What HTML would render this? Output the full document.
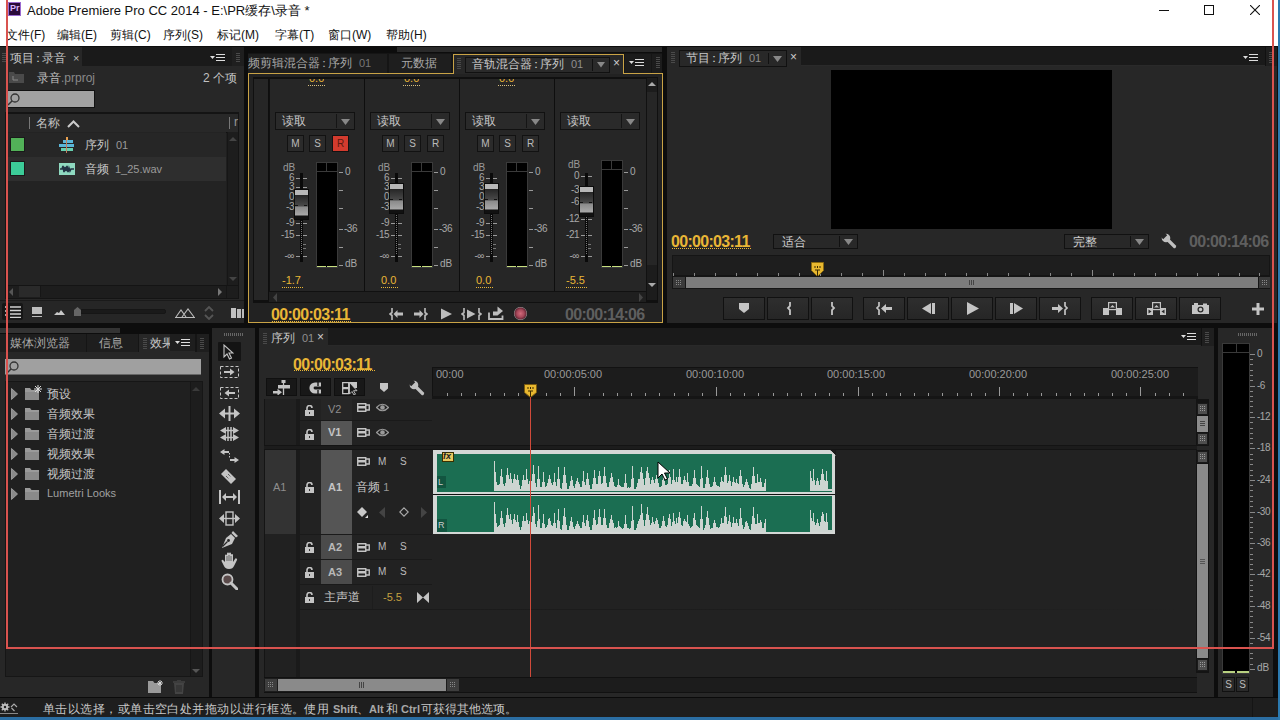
<!DOCTYPE html>
<html><head><meta charset="utf-8">
<style>
*{margin:0;padding:0;box-sizing:border-box}
html,body{width:1280px;height:720px;overflow:hidden;background:#0d0d0d;font-family:"Liberation Sans",sans-serif;color:#b8b8b8}
.a{position:absolute}
.t{position:absolute;white-space:nowrap;line-height:1}
#title{left:0;top:0;width:1280px;height:46px;background:#fff}
.pn{position:absolute;background:#272727}
.tb{position:absolute;background:#1a1a1a}
.yel{color:#e9b636}
.btn{position:absolute;background:#262626;border:1px solid #111;border-radius:1px}
.grip{position:absolute;width:5px;background:repeating-linear-gradient(#4a4a4a 0 1px,transparent 1px 2px)}
.griph{position:absolute;height:3px;background:repeating-linear-gradient(90deg,#666 0 1px,transparent 1px 2px)}
</style></head><body>
<!-- title + menu -->
<div id="title" class="a"></div>
<div class="a" style="left:8px;top:2px;width:13px;height:14px;background:#2a0a3a;border:1px solid #9a6ad0"></div>
<div class="t" style="left:10px;top:4px;font-size:9px;color:#d8b4fe;font-weight:bold">Pr</div>
<div class="t" style="left:27px;top:4px;font-size:13px;color:#111">Adobe Premiere Pro CC 2014 - E:\PR缓存\录音 *</div>
<div class="t" style="left:6px;top:29px;font-size:12px;color:#111">文件(F)</div>
<div class="t" style="left:57px;top:29px;font-size:12px;color:#111">编辑(E)</div>
<div class="t" style="left:110px;top:29px;font-size:12px;color:#111">剪辑(C)</div>
<div class="t" style="left:163px;top:29px;font-size:12px;color:#111">序列(S)</div>
<div class="t" style="left:217px;top:29px;font-size:12px;color:#111">标记(M)</div>
<div class="t" style="left:275px;top:29px;font-size:12px;color:#111">字幕(T)</div>
<div class="t" style="left:328px;top:29px;font-size:12px;color:#111">窗口(W)</div>
<div class="t" style="left:386px;top:29px;font-size:12px;color:#111">帮助(H)</div>
<div class="a" style="left:1159px;top:10px;width:10px;height:1px;background:#111"></div>
<div class="a" style="left:1204px;top:5px;width:10px;height:10px;border:1px solid #111"></div>
<svg class="a" style="left:1250px;top:5px" width="10" height="10"><path d="M0 0L10 10M10 0L0 10" stroke="#111" stroke-width="1.1"/></svg>


<!-- Project panel -->
<div class="pn" style="left:0;top:47px;width:244px;height:276px"></div>
<div class="tb" style="left:82px;top:47px;width:150px;height:19px"></div>
<div class="tb" style="left:232px;top:47px;width:12px;height:19px;background:#1f1f1f"></div>
<div class="grip" style="left:2px;top:53px;height:10px;width:4px"></div>
<div class="t" style="left:10px;top:52px;font-size:12px;color:#c4c4c4">项目<span style="margin:0 -2px">：</span>录音</div>
<div class="t" style="left:73px;top:53px;font-size:11px;color:#bbb">×</div>
<svg class="a" style="left:210px;top:53px" width="16" height="10"><path d="M0 3h5L2.5 6z" fill="#ddd"/><path d="M6 1.5h9M6 4.5h9M6 7.5h9" stroke="#ddd" stroke-width="1.2"/></svg>
<div class="grip" style="left:236px;top:53px;height:10px;width:4px"></div>
<svg class="a" style="left:9px;top:71px" width="15" height="12"><path d="M0 1h5l1 2h9v9H0z" fill="#4a4a4a"/><path d="M4 5v4h5" stroke="#888" fill="none"/></svg>
<div class="t" style="left:37px;top:72px;font-size:12px;color:#c0c0c0">录音<span style="color:#8a8a8a">.prproj</span></div>
<div class="t" style="left:203px;top:72px;font-size:12px;color:#c0c0c0">2 个项</div>
<div class="a" style="left:6px;top:90px;width:89px;height:18px;background:#a2a2a2;border:1px solid #121212"></div>
<svg class="a" style="left:7px;top:92px" width="14" height="14"><circle cx="8" cy="6" r="4" stroke="#333" stroke-width="1.3" fill="none"/><path d="M5 9L1 13" stroke="#333" stroke-width="1.5"/></svg>
<div class="a" style="left:5px;top:112px;width:234px;height:187px;background:#1f1f1f;border:1px solid #141414"></div>
<div class="a" style="left:6px;top:113px;width:232px;height:20px;background:#282828;border-top:1px solid #141414;border-bottom:1px solid #111"></div>
<div class="a" style="left:29px;top:117px;width:1px;height:12px;background:#777"></div>
<div class="t" style="left:36px;top:117px;font-size:12px;color:#c4c4c4">名称</div>
<svg class="a" style="left:67px;top:120px" width="13" height="8"><path d="M1 7L6.5 1.5 12 7" stroke="#ccc" stroke-width="2" fill="none"/></svg>
<div class="a" style="left:229px;top:117px;width:1px;height:12px;background:#777"></div>
<div class="t" style="left:234px;top:116px;font-size:12px;color:#999">r</div>
<div class="a" style="left:6px;top:132px;width:220px;height:153px;background:#232323"></div>
<div class="a" style="left:6px;top:133px;width:220px;height:24px;background:#262626"></div>
<div class="a" style="left:6px;top:157px;width:220px;height:24px;background:#2e2e2e"></div>
<div class="a" style="left:10px;top:137px;width:15px;height:15px;background:#52b158;border:1px solid #1a1a1a"></div>
<div class="a" style="left:10px;top:161px;width:15px;height:15px;background:#3ccc98;border:1px solid #1a1a1a"></div>
<svg class="a" style="left:59px;top:137px" width="16" height="17"><rect x="7" y="0" width="2" height="3" fill="#e8a050"/><rect x="4" y="3" width="10" height="3" fill="#5ab6d8"/><rect x="0" y="7" width="15" height="3" fill="#5ab6d8"/><rect x="2" y="11" width="12" height="3" fill="#66d0b0"/><rect x="7" y="3" width="1" height="13" fill="#c08060"/></svg>
<svg class="a" style="left:59px;top:163px" width="16" height="12"><rect width="16" height="12" fill="#8fd9c0"/><path d="M1 6h2l1-3 1 6 1-5 1 4 1-5 1 6 1-4 1 3 1-2h3" stroke="#234" stroke-width="1.6" fill="none"/></svg>
<div class="t" style="left:85px;top:139px;font-size:12px;color:#c8c8c8">序列<span style="color:#9a9a9a;margin-left:7px;font-size:11px">01</span></div>
<div class="t" style="left:85px;top:163px;font-size:12px;color:#c8c8c8">音频<span style="color:#9a9a9a;margin-left:6px;font-size:11px">1_25.wav</span></div>
<div class="a" style="left:227px;top:132px;width:11px;height:153px;background:#1d1d1d;border-left:1px solid #161616"></div>
<svg class="a" style="left:228px;top:136px" width="10" height="6"><path d="M1 5L5 1 9 5z" fill="#444"/></svg>
<svg class="a" style="left:228px;top:276px" width="10" height="6"><path d="M1 1L5 5 9 1z" fill="#444"/></svg>
<div class="a" style="left:6px;top:285px;width:232px;height:13px;background:#1d1d1d;border-top:1px solid #141414"></div>
<svg class="a" style="left:8px;top:287px" width="6" height="10"><path d="M5 1L1 5 5 9z" fill="#555"/></svg>
<div class="a" style="left:19px;top:286px;width:22px;height:11px;background:#2a2a2a;border-right:1px solid #161616"></div>
<svg class="a" style="left:217px;top:287px" width="6" height="10"><path d="M1 1L5 5 1 9z" fill="#777"/></svg>
<div class="a" style="left:226px;top:286px;width:1px;height:12px;background:#161616"></div>
<!-- bottom toolbar -->
<div class="a" style="left:0;top:300px;width:244px;height:23px;background:#262626;border-top:1px solid #1a1a1a"></div>
<div class="a" style="left:2px;top:303px;width:21px;height:17px;background:#161616;border-radius:2px"></div>
<svg class="a" style="left:4px;top:306px" width="18" height="12"><path d="M1 1h2M1 5h2M1 9h2M6 1h11M6 4.5h11M6 8h11M6 11.5h11" stroke="#d0d0d0" stroke-width="1.3"/></svg>
<div class="a" style="left:32px;top:307px;width:10px;height:7px;background:#bdbdbd"></div>
<div class="a" style="left:32px;top:316px;width:10px;height:1px;background:#bdbdbd"></div>
<svg class="a" style="left:54px;top:310px" width="11" height="5"><path d="M0 5L3 2 5 3 7 0 11 5z" fill="#c8c8c8"/></svg>
<div class="a" style="left:80px;top:309px;width:86px;height:5px;background:#1a1a1a;border-radius:2px;border:1px solid #161616"></div>
<svg class="a" style="left:74px;top:307px" width="7" height="9"><path d="M0 3L3.5 0 7 3v6H0z" fill="#666"/></svg>
<svg class="a" style="left:175px;top:308px" width="20" height="10"><path d="M1 9L6 2 11 9M7 9L13 1 19 9" stroke="#bbb" stroke-width="1.1" fill="none"/><path d="M0 9.5h20" stroke="#bbb"/></svg>
<svg class="a" style="left:204px;top:306px" width="10" height="14"><path d="M1 5L5 1 9 5M1 9L5 13 9 9" stroke="#555" stroke-width="1.8" fill="none"/></svg>
<div class="a" style="left:231px;top:308px;width:5px;height:10px;background:#c0c0c0"></div>
<div class="a" style="left:237px;top:309px;width:4px;height:9px;background:#bbb"></div>
<div class="a" style="left:242px;top:309px;width:2px;height:9px;background:#bbb"></div>

<!-- Audio mixer group -->
<div class="a" style="left:397px;top:47px;width:265px;height:5px;background:#2a2a2a"></div>
<div class="tb" style="left:248px;top:53px;width:414px;height:20px;background:#151515"></div>
<div class="a" style="left:625px;top:54px;width:26px;height:19px;background:#1c1c1c"></div>
<div class="a" style="left:652px;top:54px;width:10px;height:19px;background:#1c1c1c"></div>
<div class="a" style="left:248px;top:54px;width:139px;height:19px;background:#1e1e1e;overflow:hidden"><div class="t" style="left:-12px;top:3px;font-size:12px;color:#a8a8a8">音频剪辑混合器<span style="margin:0 -2px">：</span>序列<span style="color:#777;margin-left:7px;font-size:11px">01</span></div></div>
<div class="a" style="left:389px;top:54px;width:62px;height:19px;background:#1e1e1e"></div>
<div class="t" style="left:401px;top:57px;font-size:12px;color:#a8a8a8">元数据</div>
<div class="a" style="left:453px;top:54px;width:171px;height:20px;border:1px solid #c9a346;border-bottom:none;background:#272727"></div>
<div class="grip" style="left:457px;top:58px;height:11px;width:4px"></div>
<div class="a" style="left:465px;top:57px;width:145px;height:16px;background:#2a2a2a;border:1px solid #111"></div>
<div class="t" style="left:472px;top:58px;font-size:12px;color:#c8c8c8">音轨混合器<span style="margin:0 -2px">：</span>序列<span style="color:#909090;margin-left:7px;font-size:11px">01</span></div>
<div class="a" style="left:592px;top:59px;width:1px;height:12px;background:#111"></div>
<svg class="a" style="left:597px;top:62px" width="8" height="6"><path d="M0 0h8L4 5.5z" fill="#888"/></svg>
<div class="t" style="left:613px;top:57px;font-size:12px;color:#ccc">×</div>
<svg class="a" style="left:629px;top:58px" width="16" height="10"><path d="M0 3h5L2.5 6z" fill="#ddd"/><path d="M6 1.5h9M6 4.5h9M6 7.5h9" stroke="#ddd" stroke-width="1.2"/></svg>
<div class="grip" style="left:656px;top:57px;height:11px;width:4px"></div>
<div class="a" style="left:248px;top:73px;width:415px;height:250px;border:1px solid #c9a346;border-top:none"></div>
<div class="a" style="left:248px;top:73px;width:206px;height:1px;background:#c9a346"></div>
<div class="a" style="left:624px;top:73px;width:39px;height:1px;background:#c9a346"></div>
<div class="a" style="left:249px;top:74px;width:413px;height:248px;background:#222"></div>
<div class="a" style="left:253px;top:77px;width:405px;height:226px;background:#101010"></div>
<div class="a" style="left:254px;top:79px;width:15px;height:221px;background:#262626;border-right:1px solid #0e0e0e"></div>
<div class="a" style="left:270px;top:79px;width:95px;height:212px;background:#262626"></div>
<div class="t yel" style="left:309px;top:73px;font-size:11px;clip-path:inset(6px 0 0 0)">0.0</div>
<div class="a" style="left:308px;top:85px;width:17px;height:1px;background:repeating-linear-gradient(90deg,#d8c080 0 1px,transparent 1px 2px)"></div>
<div class="a" style="left:275px;top:112px;width:80px;height:18px;background:#2a2a2a;border:1px solid #111"></div>
<div class="t" style="left:282px;top:115px;font-size:12px;color:#c8c8c8">读取</div>
<div class="a" style="left:336px;top:114px;width:1px;height:14px;background:#151515"></div>
<svg class="a" style="left:341px;top:119px" width="9" height="6"><path d="M0 0h9L4.5 6z" fill="#888"/></svg>
<div class="a" style="left:287px;top:135px;width:17px;height:17px;background:#2b2b2b;border:1px solid #121212"></div>
<div class="t" style="left:287px;top:139px;width:17px;text-align:center;font-size:10px;color:#bbb">M</div>
<div class="a" style="left:309px;top:135px;width:17px;height:17px;background:#2b2b2b;border:1px solid #121212"></div>
<div class="t" style="left:309px;top:139px;width:17px;text-align:center;font-size:10px;color:#bbb">S</div>
<div class="a" style="left:332px;top:135px;width:17px;height:17px;background:#d23b2e;border:1px solid #121212"></div>
<div class="t" style="left:332px;top:139px;width:17px;text-align:center;font-size:10px;color:#5a1a10">R</div>
<div class="t" style="left:283px;top:163px;font-size:10px;color:#999">dB</div>
<div class="a" style="left:300px;top:173px;width:3px;height:89px;background:#0a0a0a"></div>
<div class="a" style="left:301px;top:215px;width:1px;height:40px;background:repeating-linear-gradient(#777 0 1px,transparent 1px 2px)"></div>
<div class="t" style="left:268px;top:173px;width:26px;text-align:right;font-size:10px;color:#a8a8a8;letter-spacing:-0.5px">6</div>
<div class="a" style="left:296px;top:178px;width:4px;height:1px;background:#999"></div>
<div class="a" style="left:303px;top:178px;width:4px;height:1px;background:#999"></div>
<div class="t" style="left:268px;top:182px;width:26px;text-align:right;font-size:10px;color:#a8a8a8;letter-spacing:-0.5px">3</div>
<div class="a" style="left:296px;top:187px;width:4px;height:1px;background:#999"></div>
<div class="a" style="left:303px;top:187px;width:4px;height:1px;background:#999"></div>
<div class="t" style="left:268px;top:192px;width:26px;text-align:right;font-size:10px;color:#a8a8a8;letter-spacing:-0.5px">0</div>
<div class="a" style="left:296px;top:197px;width:4px;height:1px;background:#999"></div>
<div class="a" style="left:303px;top:197px;width:4px;height:1px;background:#999"></div>
<div class="t" style="left:268px;top:202px;width:26px;text-align:right;font-size:10px;color:#a8a8a8;letter-spacing:-0.5px">-3</div>
<div class="a" style="left:296px;top:207px;width:4px;height:1px;background:#999"></div>
<div class="a" style="left:303px;top:207px;width:4px;height:1px;background:#999"></div>
<div class="t" style="left:268px;top:218px;width:26px;text-align:right;font-size:10px;color:#a8a8a8;letter-spacing:-0.5px">-9</div>
<div class="a" style="left:296px;top:223px;width:4px;height:1px;background:#999"></div>
<div class="a" style="left:303px;top:223px;width:4px;height:1px;background:#999"></div>
<div class="t" style="left:268px;top:230px;width:26px;text-align:right;font-size:10px;color:#a8a8a8;letter-spacing:-0.5px">-15</div>
<div class="a" style="left:296px;top:235px;width:4px;height:1px;background:#999"></div>
<div class="a" style="left:303px;top:235px;width:4px;height:1px;background:#999"></div>
<div class="t" style="left:268px;top:251px;width:26px;text-align:right;font-size:10px;color:#a8a8a8;letter-spacing:-0.5px">-∞</div>
<div class="a" style="left:296px;top:256px;width:4px;height:1px;background:#999"></div>
<div class="a" style="left:303px;top:256px;width:4px;height:1px;background:#999"></div>
<div class="a" style="left:303px;top:244px;width:3px;height:1px;background:#777"></div>
<div class="a" style="left:303px;top:248px;width:3px;height:1px;background:#777"></div>
<div class="a" style="left:294px;top:189px;width:15px;height:31px;background:linear-gradient(#b8b8b8 0 5px,#262626 5px,#4a4a4a 16px,#8a8a8a 17px,#a8a8a8 25px,#111 26px);border:1px solid #0c0c0c"></div>
<div class="a" style="left:295px;top:205px;width:3px;height:1px;background:#111"></div>
<div class="a" style="left:304px;top:205px;width:3px;height:1px;background:#111"></div>
<div class="a" style="left:316px;top:162px;width:22px;height:106px;background:#000;border:1px solid #3a3a3a"></div>
<div class="a" style="left:326px;top:163px;width:1px;height:9px;background:#3a3a3a"></div>
<div class="a" style="left:316px;top:171px;width:22px;height:1px;background:#3a3a3a"></div>
<div class="a" style="left:317px;top:266px;width:9px;height:1px;background:#c8e080"></div>
<div class="a" style="left:327px;top:266px;width:10px;height:1px;background:#c8e080"></div>
<div class="a" style="left:339px;top:172px;width:4px;height:1px;background:#999"></div>
<div class="a" style="left:339px;top:190px;width:4px;height:1px;background:#999"></div>
<div class="a" style="left:339px;top:208px;width:4px;height:1px;background:#999"></div>
<div class="a" style="left:339px;top:229px;width:4px;height:1px;background:#999"></div>
<div class="a" style="left:339px;top:247px;width:4px;height:1px;background:#999"></div>
<div class="a" style="left:339px;top:265px;width:4px;height:1px;background:#999"></div>
<div class="t" style="left:345px;top:167px;font-size:10px;color:#a8a8a8">0</div>
<div class="t" style="left:344px;top:224px;font-size:10px;color:#a8a8a8;letter-spacing:-0.5px">-36</div>
<div class="t" style="left:345px;top:259px;font-size:10px;color:#a8a8a8">dB</div>
<div class="t yel" style="left:282px;top:275px;font-size:11px">-1.7</div>
<div class="a" style="left:282px;top:287px;width:22px;height:1px;background:repeating-linear-gradient(90deg,#e9b636 0 1px,transparent 1px 2px)"></div>
<div class="a" style="left:365px;top:79px;width:95px;height:212px;background:#262626"></div>
<div class="t yel" style="left:404px;top:73px;font-size:11px;clip-path:inset(6px 0 0 0)">0.0</div>
<div class="a" style="left:403px;top:85px;width:17px;height:1px;background:repeating-linear-gradient(90deg,#d8c080 0 1px,transparent 1px 2px)"></div>
<div class="a" style="left:370px;top:112px;width:80px;height:18px;background:#2a2a2a;border:1px solid #111"></div>
<div class="t" style="left:377px;top:115px;font-size:12px;color:#c8c8c8">读取</div>
<div class="a" style="left:431px;top:114px;width:1px;height:14px;background:#151515"></div>
<svg class="a" style="left:436px;top:119px" width="9" height="6"><path d="M0 0h9L4.5 6z" fill="#888"/></svg>
<div class="a" style="left:382px;top:135px;width:17px;height:17px;background:#2b2b2b;border:1px solid #121212"></div>
<div class="t" style="left:382px;top:139px;width:17px;text-align:center;font-size:10px;color:#bbb">M</div>
<div class="a" style="left:404px;top:135px;width:17px;height:17px;background:#2b2b2b;border:1px solid #121212"></div>
<div class="t" style="left:404px;top:139px;width:17px;text-align:center;font-size:10px;color:#bbb">S</div>
<div class="a" style="left:427px;top:135px;width:17px;height:17px;background:#2b2b2b;border:1px solid #121212"></div>
<div class="t" style="left:427px;top:139px;width:17px;text-align:center;font-size:10px;color:#bbb">R</div>
<div class="t" style="left:378px;top:163px;font-size:10px;color:#999">dB</div>
<div class="a" style="left:395px;top:173px;width:3px;height:89px;background:#0a0a0a"></div>
<div class="a" style="left:396px;top:215px;width:1px;height:40px;background:repeating-linear-gradient(#777 0 1px,transparent 1px 2px)"></div>
<div class="t" style="left:363px;top:173px;width:26px;text-align:right;font-size:10px;color:#a8a8a8;letter-spacing:-0.5px">6</div>
<div class="a" style="left:391px;top:178px;width:4px;height:1px;background:#999"></div>
<div class="a" style="left:398px;top:178px;width:4px;height:1px;background:#999"></div>
<div class="t" style="left:363px;top:182px;width:26px;text-align:right;font-size:10px;color:#a8a8a8;letter-spacing:-0.5px">3</div>
<div class="a" style="left:391px;top:187px;width:4px;height:1px;background:#999"></div>
<div class="a" style="left:398px;top:187px;width:4px;height:1px;background:#999"></div>
<div class="t" style="left:363px;top:192px;width:26px;text-align:right;font-size:10px;color:#a8a8a8;letter-spacing:-0.5px">0</div>
<div class="a" style="left:391px;top:197px;width:4px;height:1px;background:#999"></div>
<div class="a" style="left:398px;top:197px;width:4px;height:1px;background:#999"></div>
<div class="t" style="left:363px;top:202px;width:26px;text-align:right;font-size:10px;color:#a8a8a8;letter-spacing:-0.5px">-3</div>
<div class="a" style="left:391px;top:207px;width:4px;height:1px;background:#999"></div>
<div class="a" style="left:398px;top:207px;width:4px;height:1px;background:#999"></div>
<div class="t" style="left:363px;top:218px;width:26px;text-align:right;font-size:10px;color:#a8a8a8;letter-spacing:-0.5px">-9</div>
<div class="a" style="left:391px;top:223px;width:4px;height:1px;background:#999"></div>
<div class="a" style="left:398px;top:223px;width:4px;height:1px;background:#999"></div>
<div class="t" style="left:363px;top:230px;width:26px;text-align:right;font-size:10px;color:#a8a8a8;letter-spacing:-0.5px">-15</div>
<div class="a" style="left:391px;top:235px;width:4px;height:1px;background:#999"></div>
<div class="a" style="left:398px;top:235px;width:4px;height:1px;background:#999"></div>
<div class="t" style="left:363px;top:251px;width:26px;text-align:right;font-size:10px;color:#a8a8a8;letter-spacing:-0.5px">-∞</div>
<div class="a" style="left:391px;top:256px;width:4px;height:1px;background:#999"></div>
<div class="a" style="left:398px;top:256px;width:4px;height:1px;background:#999"></div>
<div class="a" style="left:398px;top:244px;width:3px;height:1px;background:#777"></div>
<div class="a" style="left:398px;top:248px;width:3px;height:1px;background:#777"></div>
<div class="a" style="left:389px;top:183px;width:15px;height:31px;background:linear-gradient(#b8b8b8 0 5px,#262626 5px,#4a4a4a 16px,#8a8a8a 17px,#a8a8a8 25px,#111 26px);border:1px solid #0c0c0c"></div>
<div class="a" style="left:390px;top:199px;width:3px;height:1px;background:#111"></div>
<div class="a" style="left:399px;top:199px;width:3px;height:1px;background:#111"></div>
<div class="a" style="left:411px;top:162px;width:22px;height:106px;background:#000;border:1px solid #3a3a3a"></div>
<div class="a" style="left:421px;top:163px;width:1px;height:9px;background:#3a3a3a"></div>
<div class="a" style="left:411px;top:171px;width:22px;height:1px;background:#3a3a3a"></div>
<div class="a" style="left:412px;top:266px;width:9px;height:1px;background:#c8e080"></div>
<div class="a" style="left:422px;top:266px;width:10px;height:1px;background:#c8e080"></div>
<div class="a" style="left:434px;top:172px;width:4px;height:1px;background:#999"></div>
<div class="a" style="left:434px;top:190px;width:4px;height:1px;background:#999"></div>
<div class="a" style="left:434px;top:208px;width:4px;height:1px;background:#999"></div>
<div class="a" style="left:434px;top:229px;width:4px;height:1px;background:#999"></div>
<div class="a" style="left:434px;top:247px;width:4px;height:1px;background:#999"></div>
<div class="a" style="left:434px;top:265px;width:4px;height:1px;background:#999"></div>
<div class="t" style="left:440px;top:167px;font-size:10px;color:#a8a8a8">0</div>
<div class="t" style="left:439px;top:224px;font-size:10px;color:#a8a8a8;letter-spacing:-0.5px">-36</div>
<div class="t" style="left:440px;top:259px;font-size:10px;color:#a8a8a8">dB</div>
<div class="t yel" style="left:381px;top:275px;font-size:11px">0.0</div>
<div class="a" style="left:381px;top:287px;width:17px;height:1px;background:repeating-linear-gradient(90deg,#e9b636 0 1px,transparent 1px 2px)"></div>
<div class="a" style="left:460px;top:79px;width:95px;height:212px;background:#262626"></div>
<div class="t yel" style="left:499px;top:73px;font-size:11px;clip-path:inset(6px 0 0 0)">0.0</div>
<div class="a" style="left:498px;top:85px;width:17px;height:1px;background:repeating-linear-gradient(90deg,#d8c080 0 1px,transparent 1px 2px)"></div>
<div class="a" style="left:465px;top:112px;width:80px;height:18px;background:#2a2a2a;border:1px solid #111"></div>
<div class="t" style="left:472px;top:115px;font-size:12px;color:#c8c8c8">读取</div>
<div class="a" style="left:526px;top:114px;width:1px;height:14px;background:#151515"></div>
<svg class="a" style="left:531px;top:119px" width="9" height="6"><path d="M0 0h9L4.5 6z" fill="#888"/></svg>
<div class="a" style="left:477px;top:135px;width:17px;height:17px;background:#2b2b2b;border:1px solid #121212"></div>
<div class="t" style="left:477px;top:139px;width:17px;text-align:center;font-size:10px;color:#bbb">M</div>
<div class="a" style="left:499px;top:135px;width:17px;height:17px;background:#2b2b2b;border:1px solid #121212"></div>
<div class="t" style="left:499px;top:139px;width:17px;text-align:center;font-size:10px;color:#bbb">S</div>
<div class="a" style="left:522px;top:135px;width:17px;height:17px;background:#2b2b2b;border:1px solid #121212"></div>
<div class="t" style="left:522px;top:139px;width:17px;text-align:center;font-size:10px;color:#bbb">R</div>
<div class="t" style="left:473px;top:163px;font-size:10px;color:#999">dB</div>
<div class="a" style="left:490px;top:173px;width:3px;height:89px;background:#0a0a0a"></div>
<div class="a" style="left:491px;top:215px;width:1px;height:40px;background:repeating-linear-gradient(#777 0 1px,transparent 1px 2px)"></div>
<div class="t" style="left:458px;top:173px;width:26px;text-align:right;font-size:10px;color:#a8a8a8;letter-spacing:-0.5px">6</div>
<div class="a" style="left:486px;top:178px;width:4px;height:1px;background:#999"></div>
<div class="a" style="left:493px;top:178px;width:4px;height:1px;background:#999"></div>
<div class="t" style="left:458px;top:182px;width:26px;text-align:right;font-size:10px;color:#a8a8a8;letter-spacing:-0.5px">3</div>
<div class="a" style="left:486px;top:187px;width:4px;height:1px;background:#999"></div>
<div class="a" style="left:493px;top:187px;width:4px;height:1px;background:#999"></div>
<div class="t" style="left:458px;top:192px;width:26px;text-align:right;font-size:10px;color:#a8a8a8;letter-spacing:-0.5px">0</div>
<div class="a" style="left:486px;top:197px;width:4px;height:1px;background:#999"></div>
<div class="a" style="left:493px;top:197px;width:4px;height:1px;background:#999"></div>
<div class="t" style="left:458px;top:202px;width:26px;text-align:right;font-size:10px;color:#a8a8a8;letter-spacing:-0.5px">-3</div>
<div class="a" style="left:486px;top:207px;width:4px;height:1px;background:#999"></div>
<div class="a" style="left:493px;top:207px;width:4px;height:1px;background:#999"></div>
<div class="t" style="left:458px;top:218px;width:26px;text-align:right;font-size:10px;color:#a8a8a8;letter-spacing:-0.5px">-9</div>
<div class="a" style="left:486px;top:223px;width:4px;height:1px;background:#999"></div>
<div class="a" style="left:493px;top:223px;width:4px;height:1px;background:#999"></div>
<div class="t" style="left:458px;top:230px;width:26px;text-align:right;font-size:10px;color:#a8a8a8;letter-spacing:-0.5px">-15</div>
<div class="a" style="left:486px;top:235px;width:4px;height:1px;background:#999"></div>
<div class="a" style="left:493px;top:235px;width:4px;height:1px;background:#999"></div>
<div class="t" style="left:458px;top:251px;width:26px;text-align:right;font-size:10px;color:#a8a8a8;letter-spacing:-0.5px">-∞</div>
<div class="a" style="left:486px;top:256px;width:4px;height:1px;background:#999"></div>
<div class="a" style="left:493px;top:256px;width:4px;height:1px;background:#999"></div>
<div class="a" style="left:493px;top:244px;width:3px;height:1px;background:#777"></div>
<div class="a" style="left:493px;top:248px;width:3px;height:1px;background:#777"></div>
<div class="a" style="left:484px;top:183px;width:15px;height:31px;background:linear-gradient(#b8b8b8 0 5px,#262626 5px,#4a4a4a 16px,#8a8a8a 17px,#a8a8a8 25px,#111 26px);border:1px solid #0c0c0c"></div>
<div class="a" style="left:485px;top:199px;width:3px;height:1px;background:#111"></div>
<div class="a" style="left:494px;top:199px;width:3px;height:1px;background:#111"></div>
<div class="a" style="left:506px;top:162px;width:22px;height:106px;background:#000;border:1px solid #3a3a3a"></div>
<div class="a" style="left:516px;top:163px;width:1px;height:9px;background:#3a3a3a"></div>
<div class="a" style="left:506px;top:171px;width:22px;height:1px;background:#3a3a3a"></div>
<div class="a" style="left:507px;top:266px;width:9px;height:1px;background:#c8e080"></div>
<div class="a" style="left:517px;top:266px;width:10px;height:1px;background:#c8e080"></div>
<div class="a" style="left:529px;top:172px;width:4px;height:1px;background:#999"></div>
<div class="a" style="left:529px;top:190px;width:4px;height:1px;background:#999"></div>
<div class="a" style="left:529px;top:208px;width:4px;height:1px;background:#999"></div>
<div class="a" style="left:529px;top:229px;width:4px;height:1px;background:#999"></div>
<div class="a" style="left:529px;top:247px;width:4px;height:1px;background:#999"></div>
<div class="a" style="left:529px;top:265px;width:4px;height:1px;background:#999"></div>
<div class="t" style="left:535px;top:167px;font-size:10px;color:#a8a8a8">0</div>
<div class="t" style="left:534px;top:224px;font-size:10px;color:#a8a8a8;letter-spacing:-0.5px">-36</div>
<div class="t" style="left:535px;top:259px;font-size:10px;color:#a8a8a8">dB</div>
<div class="t yel" style="left:476px;top:275px;font-size:11px">0.0</div>
<div class="a" style="left:476px;top:287px;width:17px;height:1px;background:repeating-linear-gradient(90deg,#e9b636 0 1px,transparent 1px 2px)"></div>
<div class="a" style="left:555px;top:79px;width:95px;height:212px;background:#262626"></div>
<div class="a" style="left:560px;top:112px;width:80px;height:18px;background:#2a2a2a;border:1px solid #111"></div>
<div class="t" style="left:567px;top:115px;font-size:12px;color:#c8c8c8">读取</div>
<div class="a" style="left:621px;top:114px;width:1px;height:14px;background:#151515"></div>
<svg class="a" style="left:626px;top:119px" width="9" height="6"><path d="M0 0h9L4.5 6z" fill="#888"/></svg>
<div class="t" style="left:568px;top:160px;font-size:10px;color:#999">dB</div>
<div class="a" style="left:585px;top:173px;width:3px;height:89px;background:#0a0a0a"></div>
<div class="a" style="left:586px;top:215px;width:1px;height:40px;background:repeating-linear-gradient(#777 0 1px,transparent 1px 2px)"></div>
<div class="t" style="left:553px;top:171px;width:26px;text-align:right;font-size:10px;color:#a8a8a8;letter-spacing:-0.5px">0</div>
<div class="a" style="left:581px;top:176px;width:4px;height:1px;background:#999"></div>
<div class="a" style="left:588px;top:176px;width:4px;height:1px;background:#999"></div>
<div class="t" style="left:553px;top:185px;width:26px;text-align:right;font-size:10px;color:#a8a8a8;letter-spacing:-0.5px">-3</div>
<div class="a" style="left:581px;top:190px;width:4px;height:1px;background:#999"></div>
<div class="a" style="left:588px;top:190px;width:4px;height:1px;background:#999"></div>
<div class="t" style="left:553px;top:197px;width:26px;text-align:right;font-size:10px;color:#a8a8a8;letter-spacing:-0.5px">-6</div>
<div class="a" style="left:581px;top:202px;width:4px;height:1px;background:#999"></div>
<div class="a" style="left:588px;top:202px;width:4px;height:1px;background:#999"></div>
<div class="t" style="left:553px;top:214px;width:26px;text-align:right;font-size:10px;color:#a8a8a8;letter-spacing:-0.5px">-12</div>
<div class="a" style="left:581px;top:219px;width:4px;height:1px;background:#999"></div>
<div class="a" style="left:588px;top:219px;width:4px;height:1px;background:#999"></div>
<div class="t" style="left:553px;top:230px;width:26px;text-align:right;font-size:10px;color:#a8a8a8;letter-spacing:-0.5px">-21</div>
<div class="a" style="left:581px;top:235px;width:4px;height:1px;background:#999"></div>
<div class="a" style="left:588px;top:235px;width:4px;height:1px;background:#999"></div>
<div class="t" style="left:553px;top:251px;width:26px;text-align:right;font-size:10px;color:#a8a8a8;letter-spacing:-0.5px">-∞</div>
<div class="a" style="left:581px;top:256px;width:4px;height:1px;background:#999"></div>
<div class="a" style="left:588px;top:256px;width:4px;height:1px;background:#999"></div>
<div class="a" style="left:588px;top:244px;width:3px;height:1px;background:#777"></div>
<div class="a" style="left:588px;top:248px;width:3px;height:1px;background:#777"></div>
<div class="a" style="left:579px;top:186px;width:15px;height:31px;background:linear-gradient(#b8b8b8 0 5px,#262626 5px,#4a4a4a 16px,#8a8a8a 17px,#a8a8a8 25px,#111 26px);border:1px solid #0c0c0c"></div>
<div class="a" style="left:580px;top:202px;width:3px;height:1px;background:#111"></div>
<div class="a" style="left:589px;top:202px;width:3px;height:1px;background:#111"></div>
<div class="a" style="left:601px;top:160px;width:22px;height:108px;background:#000;border:1px solid #3a3a3a"></div>
<div class="a" style="left:611px;top:161px;width:1px;height:9px;background:#3a3a3a"></div>
<div class="a" style="left:601px;top:169px;width:22px;height:1px;background:#3a3a3a"></div>
<div class="a" style="left:602px;top:266px;width:9px;height:1px;background:#c8e080"></div>
<div class="a" style="left:612px;top:266px;width:10px;height:1px;background:#c8e080"></div>
<div class="a" style="left:624px;top:172px;width:4px;height:1px;background:#999"></div>
<div class="a" style="left:624px;top:190px;width:4px;height:1px;background:#999"></div>
<div class="a" style="left:624px;top:208px;width:4px;height:1px;background:#999"></div>
<div class="a" style="left:624px;top:229px;width:4px;height:1px;background:#999"></div>
<div class="a" style="left:624px;top:247px;width:4px;height:1px;background:#999"></div>
<div class="a" style="left:624px;top:265px;width:4px;height:1px;background:#999"></div>
<div class="t" style="left:630px;top:167px;font-size:10px;color:#a8a8a8">0</div>
<div class="t" style="left:629px;top:224px;font-size:10px;color:#a8a8a8;letter-spacing:-0.5px">-36</div>
<div class="t" style="left:630px;top:259px;font-size:10px;color:#a8a8a8">dB</div>
<div class="t yel" style="left:566px;top:275px;font-size:11px">-5.5</div>
<div class="a" style="left:566px;top:287px;width:22px;height:1px;background:repeating-linear-gradient(90deg,#e9b636 0 1px,transparent 1px 2px)"></div>
<div class="a" style="left:364px;top:79px;width:1px;height:212px;background:#0e0e0e"></div>
<div class="a" style="left:459px;top:79px;width:1px;height:212px;background:#0e0e0e"></div>
<div class="a" style="left:554px;top:79px;width:1px;height:212px;background:#0e0e0e"></div>
<div class="a" style="left:646px;top:78px;width:11px;height:222px;background:#1c1c1c;border-left:1px solid #111"></div>
<div class="a" style="left:647px;top:92px;width:10px;height:173px;background:#262626"></div>
<svg class="a" style="left:647px;top:81px" width="10" height="6"><path d="M1 5L5 1 9 5z" fill="#aaa"/></svg>
<svg class="a" style="left:647px;top:282px" width="10" height="6"><path d="M1 1L5 5 9 1z" fill="#aaa"/></svg>
<div class="a" style="left:269px;top:291px;width:377px;height:11px;background:#1f1f1f;border-top:1px solid #111"></div>
<svg class="a" style="left:272px;top:293px" width="6" height="9"><path d="M5 0L1 4.5 5 9z" fill="#444"/></svg>
<svg class="a" style="left:638px;top:293px" width="6" height="9"><path d="M1 0L5 4.5 1 9z" fill="#444"/></svg>
<div class="t yel" style="left:271px;top:307px;font-size:16px;font-weight:bold;letter-spacing:-0.7px">00:00:03:11</div>
<div class="a" style="left:272px;top:321px;width:80px;height:1px;background:repeating-linear-gradient(90deg,#e9b636 0 1px,transparent 1px 2px)"></div>
<svg class="a" style="left:389px;top:308px" width="14" height="12"><path d="M3 0v4.5l-2 1.5 2 1.5V12" stroke="#bdbdbd" stroke-width="1.6" fill="none"/><path d="M4.5 6l4-4v2.5H14v3H8.5V10z" fill="#bdbdbd"/></svg>
<svg class="a" style="left:414px;top:308px" width="14" height="12"><path d="M11 0v4.5l2 1.5-2 1.5V12" stroke="#bdbdbd" stroke-width="1.6" fill="none"/><path d="M9.5 6l-4-4v2.5H0v3h5.5V10z" fill="#bdbdbd"/></svg>
<svg class="a" style="left:441px;top:308px" width="11" height="12"><path d="M0 0.5l11 5.5-11 5.5z" fill="#bdbdbd"/></svg>
<svg class="a" style="left:461px;top:308px" width="21" height="12"><path d="M3 0v4.5l-2 1.5 2 1.5V12M18 0v4.5l2 1.5-2 1.5V12" stroke="#bdbdbd" stroke-width="1.6" fill="none"/><path d="M6 1.5l8.5 4.5L6 10.5z" fill="#bdbdbd"/></svg>
<svg class="a" style="left:488px;top:306px" width="16" height="14"><path d="M1 6.5v6.5h13.5v-3.5" stroke="#bdbdbd" stroke-width="1.8" fill="none"/><path d="M5 9.5V5.5h4.5V0.5l5.5 4.5-5.5 4.5z" fill="#bdbdbd"/></svg>
<div class="a" style="left:514px;top:307px;width:13px;height:13px;border-radius:50%;background:radial-gradient(circle at 50% 50%,#d06a7a 0,#a8485a 40%,#6a2a38 62%,#ddd 72%,#999 100%)"></div>
<div class="t" style="left:565px;top:307px;font-size:16px;font-weight:bold;color:#5f5f5f;letter-spacing:-0.7px">00:00:14:06</div>
<!-- Program monitor -->
<div class="pn" style="left:667px;top:47px;width:610px;height:276px"></div>
<div class="tb" style="left:801px;top:47px;width:464px;height:19px;background:#1a1a1a;border-bottom:1px solid #2a2a2a"></div>
<div class="a" style="left:1265px;top:47px;width:12px;height:19px;background:#1f1f1f;border-left:1px solid #111"></div>
<div class="grip" style="left:1269px;top:52px;height:11px;width:4px"></div>
<div class="grip" style="left:671px;top:52px;height:11px;width:4px"></div>
<div class="a" style="left:679px;top:50px;width:108px;height:17px;background:#282828;border:1px solid #111"></div>
<div class="t" style="left:686px;top:52px;font-size:12px;color:#c8c8c8">节目<span style="margin:0 -2px">：</span>序列<span style="color:#909090;margin-left:7px;font-size:11px">01</span></div>
<div class="a" style="left:768px;top:53px;width:1px;height:11px;background:#111"></div>
<svg class="a" style="left:773px;top:56px" width="9" height="6"><path d="M0 0h9L4.5 6z" fill="#888"/></svg>
<div class="t" style="left:790px;top:51px;font-size:12px;color:#ccc">×</div>
<svg class="a" style="left:1243px;top:53px" width="16" height="10"><path d="M0 3h5L2.5 6z" fill="#ddd"/><path d="M6 1.5h9M6 4.5h9M6 7.5h9" stroke="#ddd" stroke-width="1.2"/></svg>
<div class="a" style="left:831px;top:70px;width:281px;height:159px;background:#000"></div>
<div class="t yel" style="left:671px;top:234px;font-size:16px;font-weight:bold;letter-spacing:-0.7px">00:00:03:11</div>
<div class="a" style="left:672px;top:248px;width:80px;height:1px;background:repeating-linear-gradient(90deg,#e9b636 0 1px,transparent 1px 2px)"></div>
<div class="a" style="left:773px;top:234px;width:85px;height:15px;background:#282828;border:1px solid #111"></div>
<div class="t" style="left:782px;top:236px;font-size:12px;color:#d0d0d0">适合</div>
<div class="a" style="left:839px;top:236px;width:1px;height:11px;background:#111"></div>
<svg class="a" style="left:844px;top:239px" width="9" height="6"><path d="M0 0h9L4.5 6z" fill="#888"/></svg>
<div class="a" style="left:1064px;top:234px;width:85px;height:15px;background:#282828;border:1px solid #111"></div>
<div class="t" style="left:1073px;top:236px;font-size:12px;color:#d0d0d0">完整</div>
<div class="a" style="left:1130px;top:236px;width:1px;height:11px;background:#111"></div>
<svg class="a" style="left:1135px;top:239px" width="9" height="6"><path d="M0 0h9L4.5 6z" fill="#888"/></svg>
<svg class="a" style="left:1161px;top:233px" width="16" height="16"><path d="M6.5 6.5L13.5 13.5" stroke="#c0c0c0" stroke-width="3.2" stroke-linecap="round"/><circle cx="5" cy="5" r="4.3" fill="#c0c0c0"/><path d="M-0.5 3.5L3.5 -0.5 6.2 2.2 2.2 6.2z" fill="#272727"/></svg>
<div class="t" style="left:1189px;top:234px;font-size:16px;font-weight:bold;color:#5f5f5f;letter-spacing:-0.7px">00:00:14:06</div>
<div class="a" style="left:672px;top:255px;width:598px;height:21px;background:#1e1e1e;border:1px solid #151515"></div>
<div class="a" style="left:673px;top:273px;width:1px;height:3px;background:#888"></div><div class="a" style="left:694px;top:273px;width:1px;height:3px;background:#888"></div><div class="a" style="left:715px;top:273px;width:1px;height:3px;background:#888"></div><div class="a" style="left:736px;top:273px;width:1px;height:3px;background:#888"></div><div class="a" style="left:757px;top:273px;width:1px;height:3px;background:#888"></div><div class="a" style="left:778px;top:273px;width:1px;height:3px;background:#888"></div><div class="a" style="left:799px;top:273px;width:1px;height:3px;background:#888"></div><div class="a" style="left:820px;top:273px;width:1px;height:3px;background:#888"></div><div class="a" style="left:841px;top:273px;width:1px;height:3px;background:#888"></div><div class="a" style="left:862px;top:273px;width:1px;height:3px;background:#888"></div><div class="a" style="left:883px;top:270px;width:1px;height:6px;background:#888"></div><div class="a" style="left:904px;top:273px;width:1px;height:3px;background:#888"></div><div class="a" style="left:925px;top:273px;width:1px;height:3px;background:#888"></div><div class="a" style="left:945px;top:273px;width:1px;height:3px;background:#888"></div><div class="a" style="left:966px;top:273px;width:1px;height:3px;background:#888"></div><div class="a" style="left:987px;top:273px;width:1px;height:3px;background:#888"></div><div class="a" style="left:1008px;top:273px;width:1px;height:3px;background:#888"></div><div class="a" style="left:1029px;top:273px;width:1px;height:3px;background:#888"></div><div class="a" style="left:1050px;top:273px;width:1px;height:3px;background:#888"></div><div class="a" style="left:1071px;top:273px;width:1px;height:3px;background:#888"></div><div class="a" style="left:1092px;top:270px;width:1px;height:6px;background:#888"></div><div class="a" style="left:1113px;top:273px;width:1px;height:3px;background:#888"></div><div class="a" style="left:1134px;top:273px;width:1px;height:3px;background:#888"></div><div class="a" style="left:1155px;top:273px;width:1px;height:3px;background:#888"></div><div class="a" style="left:1176px;top:273px;width:1px;height:3px;background:#888"></div><div class="a" style="left:1197px;top:273px;width:1px;height:3px;background:#888"></div><div class="a" style="left:1218px;top:273px;width:1px;height:3px;background:#888"></div><div class="a" style="left:1239px;top:273px;width:1px;height:3px;background:#888"></div><div class="a" style="left:1259px;top:273px;width:1px;height:3px;background:#888"></div>
<svg class="a" style="left:811px;top:262px" width="13" height="15"><path d="M0.5 0.5h12v8l-6 6-6-6z" fill="#e8b830" stroke="#8a6a10"/><path d="M4 4v2M6.5 4v2M9 4v2M4 8h5M6.5 8v6" stroke="#3a2a00" stroke-width="1"/></svg>
<div class="a" style="left:672px;top:276px;width:598px;height:13px;background:#151515"></div>
<div class="a" style="left:673px;top:277px;width:12px;height:11px;background:#3a3a3a"></div>
<div class="a" style="left:676px;top:280px;width:5px;height:5px;background:repeating-linear-gradient(90deg,#888 0 1px,transparent 1px 2px);-webkit-mask:repeating-linear-gradient(#000 0 1px,transparent 1px 2px)"></div>
<div class="a" style="left:686px;top:277px;width:572px;height:11px;background:#7c7c7c"></div>
<div class="a" style="left:969px;top:280px;width:5px;height:5px;background:repeating-linear-gradient(90deg,#444 0 1px,transparent 1px 2px)"></div>
<div class="a" style="left:1259px;top:277px;width:11px;height:11px;background:#3a3a3a"></div>
<div class="a" style="left:1262px;top:280px;width:5px;height:5px;background:repeating-linear-gradient(90deg,#888 0 1px,transparent 1px 2px);-webkit-mask:repeating-linear-gradient(#000 0 1px,transparent 1px 2px)"></div>
<div class="a" style="left:723px;top:297px;width:42px;height:23px;background:linear-gradient(#2e2e2e,#262626);border:1px solid #111"></div>
<svg class="a" style="left:739px;top:303px" width="10" height="11"><path d="M0 0h10v6l-5 4-5-4z" fill="#c4c4c4"/></svg>
<div class="a" style="left:767px;top:297px;width:42px;height:23px;background:linear-gradient(#2e2e2e,#262626);border:1px solid #111"></div>
<svg class="a" style="left:784px;top:302px" width="8" height="13"><path d="M6 0v4l-2 2 2 2v5" stroke="#c4c4c4" stroke-width="1.8" fill="none"/></svg>
<div class="a" style="left:811px;top:297px;width:42px;height:23px;background:linear-gradient(#2e2e2e,#262626);border:1px solid #111"></div>
<svg class="a" style="left:828px;top:302px" width="8" height="13"><path d="M4 0v4l2 2-2 2v5" stroke="#c4c4c4" stroke-width="1.8" fill="none"/></svg>
<div class="a" style="left:863px;top:297px;width:42px;height:23px;background:linear-gradient(#2e2e2e,#262626);border:1px solid #111"></div>
<svg class="a" style="left:876px;top:302px" width="16" height="13"><path d="M3 0v4l-2 2 2 2v5" stroke="#c4c4c4" stroke-width="1.7" fill="none"/><path d="M5 6.5l5-4.5v3h6v3h-6v3z" fill="#c4c4c4"/></svg>
<div class="a" style="left:907px;top:297px;width:42px;height:23px;background:linear-gradient(#2e2e2e,#262626);border:1px solid #111"></div>
<svg class="a" style="left:922px;top:302px" width="13" height="13"><path d="M0 6.5L9 1v11z" fill="#c4c4c4"/><rect x="10" y="1" width="3" height="11" fill="#c4c4c4"/></svg>
<div class="a" style="left:951px;top:297px;width:42px;height:23px;background:linear-gradient(#2e2e2e,#262626);border:1px solid #111"></div>
<svg class="a" style="left:966px;top:302px" width="13" height="13"><path d="M1 0l12 6.5L1 13z" fill="#c4c4c4"/></svg>
<div class="a" style="left:995px;top:297px;width:42px;height:23px;background:linear-gradient(#2e2e2e,#262626);border:1px solid #111"></div>
<svg class="a" style="left:1010px;top:302px" width="13" height="13"><rect x="0" y="1" width="3" height="11" fill="#c4c4c4"/><path d="M4 1l9 5.5L4 12z" fill="#c4c4c4"/></svg>
<div class="a" style="left:1039px;top:297px;width:42px;height:23px;background:linear-gradient(#2e2e2e,#262626);border:1px solid #111"></div>
<svg class="a" style="left:1052px;top:302px" width="16" height="13"><path d="M13 0v4l2 2-2 2v5" stroke="#c4c4c4" stroke-width="1.7" fill="none"/><path d="M11 6.5L6 2v3H0v3h6v3z" fill="#c4c4c4"/></svg>
<div class="a" style="left:1091px;top:297px;width:42px;height:23px;background:linear-gradient(#2e2e2e,#262626);border:1px solid #111"></div>
<svg class="a" style="left:1103px;top:302px" width="19" height="13"><rect x="5.6" y="0.6" width="7.8" height="7" fill="none" stroke="#c4c4c4" stroke-width="1.2"/><path d="M7 5.5L9.5 3 12 5.5z" fill="#c4c4c4"/><rect x="0" y="6" width="6" height="7" fill="#c4c4c4"/><rect x="13" y="6" width="6" height="7" fill="#c4c4c4"/></svg>
<div class="a" style="left:1135px;top:297px;width:42px;height:23px;background:linear-gradient(#2e2e2e,#262626);border:1px solid #111"></div>
<svg class="a" style="left:1147px;top:302px" width="19" height="13"><rect x="5.6" y="0.6" width="7.8" height="7" fill="none" stroke="#c4c4c4" stroke-width="1.2"/><path d="M7 5.5L9.5 3 12 5.5z" fill="#c4c4c4"/><rect x="0" y="6" width="6" height="7" fill="#c4c4c4"/><rect x="13" y="6" width="6" height="7" fill="#c4c4c4"/><path d="M1.5 7.5l3 2-3 2zM17.5 7.5l-3 2 3 2z" fill="#2a2a2a"/></svg>
<div class="a" style="left:1179px;top:297px;width:42px;height:23px;background:linear-gradient(#2e2e2e,#262626);border:1px solid #111"></div>
<svg class="a" style="left:1192px;top:303px" width="17" height="11"><path d="M0 2h2V0h4v2h5V0.5h4V2h2v9H0z" fill="#c4c4c4"/><circle cx="8.5" cy="6.5" r="2.4" fill="none" stroke="#2a2a2a" stroke-width="1.3"/></svg>
<svg class="a" style="left:1252px;top:303px" width="12" height="12"><path d="M6 0v12M0 6h12" stroke="#c4c4c4" stroke-width="3"/></svg>
<!-- Effects -->
<div class="a" style="left:0;top:328px;width:120px;height:5px;background:#333"></div>
<div class="pn" style="left:0;top:352px;width:209px;height:345px"></div>
<div class="tb" style="left:0;top:334px;width:209px;height:18px;background:#151515"></div>
<div class="a" style="left:0;top:334px;width:86px;height:18px;background:#1e1e1e"></div>
<div class="t" style="left:10px;top:337px;font-size:12px;color:#a8a8a8">媒体浏览器</div>
<div class="a" style="left:87px;top:334px;width:51px;height:18px;background:#1e1e1e"></div>
<div class="t" style="left:99px;top:337px;font-size:12px;color:#a8a8a8">信息</div>
<div class="a" style="left:139px;top:334px;width:56px;height:19px;background:#272727;overflow:hidden"><div class="t" style="left:11px;top:3px;font-size:12px;color:#c8c8c8">效果</div></div>
<div class="grip" style="left:143px;top:338px;height:11px;width:4px"></div>
<div class="a" style="left:170px;top:334px;width:25px;height:17px;background:#1e1e1e"></div>
<svg class="a" style="left:175px;top:338px" width="16" height="10"><path d="M0 3h5L2.5 6z" fill="#ddd"/><path d="M6 1.5h9M6 4.5h9M6 7.5h9" stroke="#ddd" stroke-width="1.2"/></svg>
<div class="a" style="left:197px;top:334px;width:12px;height:18px;background:#1e1e1e"></div>
<div class="grip" style="left:200px;top:338px;height:11px;width:4px"></div>
<div class="a" style="left:5px;top:359px;width:196px;height:16px;background:#a0a0a0;border-bottom:1px solid #666"></div>
<svg class="a" style="left:6px;top:360px" width="14" height="14"><circle cx="8" cy="6" r="4" stroke="#333" stroke-width="1.3" fill="none"/><path d="M5 9L1 13" stroke="#333" stroke-width="1.5"/></svg>
<div class="a" style="left:5px;top:381px;width:198px;height:296px;background:#202020;border:1px solid #161616"></div>
<div class="a" style="left:190px;top:382px;width:12px;height:294px;background:#1d1d1d;border-left:1px solid #161616"></div>
<svg class="a" style="left:191px;top:386px" width="10" height="6"><path d="M1 5L5 1 9 5z" fill="#3a3a3a"/></svg>
<svg class="a" style="left:191px;top:668px" width="10" height="6"><path d="M1 1L5 5 9 1z" fill="#555"/></svg>
<svg class="a" style="left:11px;top:388px" width="7" height="12"><path d="M0.5 0.5L6.5 6 0.5 11.5z" fill="#8a8a8a" stroke="#a8a8a8" stroke-width="0.8"/></svg>
<svg class="a" style="left:25px;top:388px" width="15" height="12"><path d="M0 0h5l1.5 2H14v10H0z" fill="#9a9a9a"/><path d="M0 4h14v8H0z" fill="#8a8a8a"/></svg>
<svg class="a" style="left:34px;top:385px" width="8" height="8"><path d="M4 0v8M0 4h8M1 1l6 6M7 1L1 7" stroke="#ddd" stroke-width="1"/></svg>
<div class="t" style="left:47px;top:388px;font-size:12px;color:#c8c8c8">预设</div>
<svg class="a" style="left:11px;top:408px" width="7" height="12"><path d="M0.5 0.5L6.5 6 0.5 11.5z" fill="#8a8a8a" stroke="#a8a8a8" stroke-width="0.8"/></svg>
<svg class="a" style="left:25px;top:408px" width="15" height="12"><path d="M0 0h5l1.5 2H14v10H0z" fill="#9a9a9a"/><path d="M0 4h14v8H0z" fill="#8a8a8a"/></svg>
<div class="t" style="left:47px;top:408px;font-size:12px;color:#c8c8c8">音频效果</div>
<svg class="a" style="left:11px;top:428px" width="7" height="12"><path d="M0.5 0.5L6.5 6 0.5 11.5z" fill="#8a8a8a" stroke="#a8a8a8" stroke-width="0.8"/></svg>
<svg class="a" style="left:25px;top:428px" width="15" height="12"><path d="M0 0h5l1.5 2H14v10H0z" fill="#9a9a9a"/><path d="M0 4h14v8H0z" fill="#8a8a8a"/></svg>
<div class="t" style="left:47px;top:428px;font-size:12px;color:#c8c8c8">音频过渡</div>
<svg class="a" style="left:11px;top:448px" width="7" height="12"><path d="M0.5 0.5L6.5 6 0.5 11.5z" fill="#8a8a8a" stroke="#a8a8a8" stroke-width="0.8"/></svg>
<svg class="a" style="left:25px;top:448px" width="15" height="12"><path d="M0 0h5l1.5 2H14v10H0z" fill="#9a9a9a"/><path d="M0 4h14v8H0z" fill="#8a8a8a"/></svg>
<div class="t" style="left:47px;top:448px;font-size:12px;color:#c8c8c8">视频效果</div>
<svg class="a" style="left:11px;top:468px" width="7" height="12"><path d="M0.5 0.5L6.5 6 0.5 11.5z" fill="#8a8a8a" stroke="#a8a8a8" stroke-width="0.8"/></svg>
<svg class="a" style="left:25px;top:468px" width="15" height="12"><path d="M0 0h5l1.5 2H14v10H0z" fill="#9a9a9a"/><path d="M0 4h14v8H0z" fill="#8a8a8a"/></svg>
<div class="t" style="left:47px;top:468px;font-size:12px;color:#c8c8c8">视频过渡</div>
<svg class="a" style="left:11px;top:488px" width="7" height="12"><path d="M0.5 0.5L6.5 6 0.5 11.5z" fill="#8a8a8a" stroke="#a8a8a8" stroke-width="0.8"/></svg>
<svg class="a" style="left:25px;top:488px" width="15" height="12"><path d="M0 0h5l1.5 2H14v10H0z" fill="#9a9a9a"/><path d="M0 4h14v8H0z" fill="#8a8a8a"/></svg>
<div class="t" style="left:47px;top:488px;font-size:11px;color:#a0a0a0">Lumetri Looks</div>
<svg class="a" style="left:148px;top:680px" width="16" height="13"><path d="M0 1h5l1.5 2H13v10H0z" fill="#9a9a9a"/><path d="M12 0v6M9 3h6M10 1l4 4M14 1l-4 4" stroke="#ddd" stroke-width="0.9"/></svg>
<svg class="a" style="left:173px;top:680px" width="12" height="14"><path d="M0 2h12M4 0h4" stroke="#444" stroke-width="1.5"/><path d="M1 3h10l-1 11H2z" fill="#444"/><path d="M4 5v7M6 5v7M8 5v7" stroke="#2a2a2a"/></svg>
<div class="pn" style="left:212px;top:328px;width:43px;height:369px"></div>
<div class="griph" style="left:224px;top:333px;width:20px"></div>
<div class="a" style="left:218px;top:342px;width:23px;height:19px;background:#141414;border-radius:1px"></div>
<svg class="a" style="left:223px;top:344px" width="11" height="16"><path d="M1 1v12l3-3 2.5 5 2-1-2.5-5h4z" fill="#1a1a1a" stroke="#c4c4c4" stroke-width="1.1"/></svg>
<svg class="a" style="left:220px;top:366px" width="19" height="12"><rect x="0.5" y="0.5" width="18" height="11" fill="none" stroke="#c4c4c4" stroke-dasharray="3 2"/><path d="M4 5h6V2.5l4.5 3.5L10 9.5V7H4z" fill="#c4c4c4"/></svg>
<svg class="a" style="left:220px;top:387px" width="19" height="12"><rect x="0.5" y="0.5" width="18" height="11" fill="none" stroke="#c4c4c4" stroke-dasharray="3 2"/><path d="M15 5H9V2.5L4.5 6 9 9.5V7h6z" fill="#c4c4c4"/></svg>
<svg class="a" style="left:219px;top:406px" width="21" height="15"><path d="M10.5 0v15" stroke="#c4c4c4" stroke-width="2"/><path d="M0 7.5l6-5v10zM21 7.5l-6-5v10z" fill="#c4c4c4"/><path d="M5 7.5h11" stroke="#c4c4c4" stroke-width="2"/></svg>
<svg class="a" style="left:220px;top:427px" width="19" height="14"><path d="M8 0v14M11 0v14" stroke="#c4c4c4" stroke-width="1.5"/><path d="M0 3.5l6-3.5v7zM19 3.5l-6-3.5v7zM0 10.5l6-3.5v7zM19 10.5l-6-3.5v7z" fill="#c4c4c4"/><path d="M4 3.5h11M4 10.5h11" stroke="#c4c4c4" stroke-width="1.6"/></svg>
<svg class="a" style="left:220px;top:449px" width="19" height="14"><path d="M3 3h6M10 11h6" stroke="#c4c4c4" stroke-width="2"/><path d="M0 3l4.5-3v6zM19 11l-4.5-3v6z" fill="#c4c4c4"/><path d="M9.5 4v6" stroke="#c4c4c4" stroke-dasharray="1.5 1.5"/></svg>
<svg class="a" style="left:220px;top:468px" width="17" height="17"><path d="M6 1l10 10-5 5L1 6z" fill="#c4c4c4"/><path d="M6 8l3 3M8 6l3 3" stroke="#333" stroke-width="1" stroke-dasharray="1 1"/></svg>
<svg class="a" style="left:219px;top:490px" width="21" height="14"><path d="M1 0v14M20 0v14" stroke="#c4c4c4" stroke-width="2"/><path d="M3 7l4-4v3h7V3l4 4-4 4V8H7v3z" fill="#c4c4c4"/></svg>
<svg class="a" style="left:219px;top:511px" width="21" height="15"><path d="M0 7.5l5-4.5v9zM21 7.5l-5-4.5v9z" fill="#c4c4c4"/><rect x="7" y="1" width="7" height="13" fill="none" stroke="#c4c4c4" stroke-width="1.4"/><path d="M4 7.5h13" stroke="#c4c4c4" stroke-width="1.4"/></svg>
<svg class="a" style="left:221px;top:531px" width="17" height="17"><path d="M12 0l5 5-2 1.5-4.5-4.5z" fill="#c4c4c4"/><path d="M10 3l4 4-3 6-10 4 4-10z" fill="#c4c4c4"/><path d="M1.5 15.5l5-5" stroke="#272727" stroke-width="1.2"/><circle cx="7.5" cy="9.5" r="1.4" fill="#272727"/></svg>
<svg class="a" style="left:221px;top:552px" width="17" height="17"><path d="M4 10V3.5a1 1 0 0 1 2 0V8V1.5a1 1 0 0 1 2 0V8V1.5a1 1 0 0 1 2 0V8V3a1 1 0 0 1 2 0V10l2-3a1 1 0 0 1 2 1l-3 6c-1 2-2 3-5 3-3 0-4.5-1.5-5-3L0.5 9a1 1 0 0 1 1.5-1z" fill="#c4c4c4"/><path d="M6 9V4M8 9V3M10 9V4" stroke="#272727" stroke-width="0.6"/></svg>
<svg class="a" style="left:221px;top:573px" width="17" height="17"><circle cx="6.5" cy="6.5" r="5" fill="#5a4a4a" stroke="#c4c4c4" stroke-width="1.8"/><path d="M10 10l6 6" stroke="#c4c4c4" stroke-width="3" stroke-linecap="round"/></svg>
<!-- Timeline -->
<div class="pn" style="left:259px;top:328px;width:955px;height:369px"></div>
<div class="tb" style="left:328px;top:328px;width:886px;height:18px;background:#1a1a1a;border-bottom:1px solid #292929"></div>
<div class="grip" style="left:263px;top:333px;height:11px;width:4px"></div>
<div class="t" style="left:271px;top:332px;font-size:12px;color:#c8c8c8">序列<span style="color:#909090;margin-left:7px;font-size:11px">01</span></div>
<div class="t" style="left:317px;top:331px;font-size:12px;color:#ccc">×</div>
<svg class="a" style="left:1181px;top:332px" width="16" height="10"><path d="M0 3h5L2.5 6z" fill="#ddd"/><path d="M6 1.5h9M6 4.5h9M6 7.5h9" stroke="#ddd" stroke-width="1.2"/></svg>
<div class="a" style="left:1201px;top:328px;width:13px;height:18px;background:#1f1f1f;border-left:1px solid #111"></div>
<div class="grip" style="left:1205px;top:332px;height:11px;width:4px"></div>
<div class="t yel" style="left:293px;top:357px;font-size:16px;font-weight:bold;letter-spacing:-0.7px">00:00:03:11</div>
<div class="a" style="left:294px;top:370px;width:81px;height:1px;background:repeating-linear-gradient(90deg,#e9b636 0 1px,transparent 1px 2px)"></div>
<div class="a" style="left:266px;top:378px;width:31px;height:18px;background:#181818;border:1px solid #101010"></div>
<div class="a" style="left:300px;top:378px;width:31px;height:18px;background:#181818;border:1px solid #101010"></div>
<div class="a" style="left:334px;top:378px;width:31px;height:18px;background:#181818;border:1px solid #101010"></div>
<svg class="a" style="left:273px;top:379px" width="19" height="16"><rect x="8.5" y="1" width="4" height="3" fill="#c4c4c4"/><path d="M10.5 1v15" stroke="#c4c4c4" stroke-width="1.3"/><rect x="5" y="6" width="12" height="3.5" fill="#c4c4c4"/><path d="M0 12h4.5v-2.2l4.5 3.4-4.5 3.4v-2.2H0z" fill="#c4c4c4"/></svg>
<svg class="a" style="left:308px;top:382px" width="14" height="12"><path d="M13 2.5H7a3.5 3.5 0 0 0 0 7h6" stroke="#c4c4c4" stroke-width="4.2" fill="none"/><path d="M10 0v4M10 8v4" stroke="#181818" stroke-width="1.4"/></svg>
<svg class="a" style="left:342px;top:381px" width="16" height="14"><path d="M0.7 1.7h6v5h-6zM0.7 7.7h6v5h-6z" fill="none" stroke="#c4c4c4" stroke-width="1.3"/><rect x="7" y="1" width="8" height="6" fill="#c4c4c4"/><path d="M7.5 1.5v11.5l2.5-2.5 2 3.5 1.5-0.8-2-3.5h3.5z" fill="#181818" stroke="#c4c4c4" stroke-width="0.9"/></svg>
<svg class="a" style="left:380px;top:383px" width="8" height="9"><path d="M0 0h8v5.5l-4 3.5-4-3.5z" fill="#c4c4c4"/></svg>
<svg class="a" style="left:409px;top:380px" width="16" height="16"><path d="M6.5 6.5L13.5 13.5" stroke="#c0c0c0" stroke-width="3.2" stroke-linecap="round"/><circle cx="5" cy="5" r="4.3" fill="#c0c0c0"/><path d="M-0.5 3.5L3.5 -0.5 6.2 2.2 2.2 6.2z" fill="#272727"/></svg>
<div class="a" style="left:432px;top:367px;width:766px;height:30px;background:#1c1c1c;border-top:1px solid #121212;border-left:1px solid #121212"></div>
<div class="a" style="left:432px;top:396px;width:766px;height:3px;background:#151515"></div>
<div class="t" style="left:436px;top:369px;font-size:11px;color:#9a9a9a">00:00</div>
<div class="t" style="left:544px;top:369px;font-size:11px;color:#9a9a9a">00:00:05:00</div>
<div class="t" style="left:686px;top:369px;font-size:11px;color:#9a9a9a">00:00:10:00</div>
<div class="t" style="left:827px;top:369px;font-size:11px;color:#9a9a9a">00:00:15:00</div>
<div class="t" style="left:969px;top:369px;font-size:11px;color:#9a9a9a">00:00:20:00</div>
<div class="t" style="left:1111px;top:369px;font-size:11px;color:#9a9a9a">00:00:25:00</div>
<div class="a" style="left:447px;top:393px;width:1px;height:3px;background:#999"></div><div class="a" style="left:461px;top:393px;width:1px;height:3px;background:#999"></div><div class="a" style="left:475px;top:393px;width:1px;height:3px;background:#999"></div><div class="a" style="left:490px;top:393px;width:1px;height:3px;background:#999"></div><div class="a" style="left:504px;top:393px;width:1px;height:3px;background:#999"></div><div class="a" style="left:518px;top:393px;width:1px;height:3px;background:#999"></div><div class="a" style="left:532px;top:393px;width:1px;height:3px;background:#999"></div><div class="a" style="left:546px;top:393px;width:1px;height:3px;background:#999"></div><div class="a" style="left:560px;top:393px;width:1px;height:3px;background:#999"></div><div class="a" style="left:574px;top:387px;width:1px;height:9px;background:#999"></div><div class="a" style="left:589px;top:393px;width:1px;height:3px;background:#999"></div><div class="a" style="left:603px;top:393px;width:1px;height:3px;background:#999"></div><div class="a" style="left:617px;top:393px;width:1px;height:3px;background:#999"></div><div class="a" style="left:631px;top:393px;width:1px;height:3px;background:#999"></div><div class="a" style="left:645px;top:393px;width:1px;height:3px;background:#999"></div><div class="a" style="left:659px;top:393px;width:1px;height:3px;background:#999"></div><div class="a" style="left:674px;top:393px;width:1px;height:3px;background:#999"></div><div class="a" style="left:688px;top:393px;width:1px;height:3px;background:#999"></div><div class="a" style="left:702px;top:393px;width:1px;height:3px;background:#999"></div><div class="a" style="left:716px;top:387px;width:1px;height:9px;background:#999"></div><div class="a" style="left:730px;top:393px;width:1px;height:3px;background:#999"></div><div class="a" style="left:744px;top:393px;width:1px;height:3px;background:#999"></div><div class="a" style="left:758px;top:393px;width:1px;height:3px;background:#999"></div><div class="a" style="left:773px;top:393px;width:1px;height:3px;background:#999"></div><div class="a" style="left:787px;top:393px;width:1px;height:3px;background:#999"></div><div class="a" style="left:801px;top:393px;width:1px;height:3px;background:#999"></div><div class="a" style="left:815px;top:393px;width:1px;height:3px;background:#999"></div><div class="a" style="left:829px;top:393px;width:1px;height:3px;background:#999"></div><div class="a" style="left:843px;top:393px;width:1px;height:3px;background:#999"></div><div class="a" style="left:858px;top:387px;width:1px;height:9px;background:#999"></div><div class="a" style="left:872px;top:393px;width:1px;height:3px;background:#999"></div><div class="a" style="left:886px;top:393px;width:1px;height:3px;background:#999"></div><div class="a" style="left:900px;top:393px;width:1px;height:3px;background:#999"></div><div class="a" style="left:914px;top:393px;width:1px;height:3px;background:#999"></div><div class="a" style="left:928px;top:393px;width:1px;height:3px;background:#999"></div><div class="a" style="left:942px;top:393px;width:1px;height:3px;background:#999"></div><div class="a" style="left:957px;top:393px;width:1px;height:3px;background:#999"></div><div class="a" style="left:971px;top:393px;width:1px;height:3px;background:#999"></div><div class="a" style="left:985px;top:393px;width:1px;height:3px;background:#999"></div><div class="a" style="left:999px;top:387px;width:1px;height:9px;background:#999"></div><div class="a" style="left:1013px;top:393px;width:1px;height:3px;background:#999"></div><div class="a" style="left:1027px;top:393px;width:1px;height:3px;background:#999"></div><div class="a" style="left:1041px;top:393px;width:1px;height:3px;background:#999"></div><div class="a" style="left:1056px;top:393px;width:1px;height:3px;background:#999"></div><div class="a" style="left:1070px;top:393px;width:1px;height:3px;background:#999"></div><div class="a" style="left:1084px;top:393px;width:1px;height:3px;background:#999"></div><div class="a" style="left:1098px;top:393px;width:1px;height:3px;background:#999"></div><div class="a" style="left:1112px;top:393px;width:1px;height:3px;background:#999"></div><div class="a" style="left:1126px;top:393px;width:1px;height:3px;background:#999"></div><div class="a" style="left:1140px;top:387px;width:1px;height:9px;background:#999"></div><div class="a" style="left:1155px;top:393px;width:1px;height:3px;background:#999"></div><div class="a" style="left:1169px;top:393px;width:1px;height:3px;background:#999"></div><div class="a" style="left:1183px;top:393px;width:1px;height:3px;background:#999"></div>
<div class="a" style="left:264px;top:399px;width:933px;height:278px;background:#222"></div>
<div class="a" style="left:264px;top:399px;width:33px;height:278px;background:#212121"></div>
<div class="a" style="left:296px;top:399px;width:4px;height:278px;background:#1a1a1a"></div>
<div class="a" style="left:264px;top:399px;width:1px;height:278px;background:#151515"></div>
<div class="a" style="left:264px;top:445px;width:933px;height:5px;background:#1c1c1c;border-top:1px solid #141414;border-bottom:1px solid #141414"></div>
<div class="a" style="left:300px;top:420px;width:132px;height:1px;background:#1a1a1a"></div>
<div class="a" style="left:300px;top:534px;width:132px;height:1px;background:#1a1a1a"></div>
<div class="a" style="left:300px;top:559px;width:132px;height:1px;background:#1a1a1a"></div>
<div class="a" style="left:300px;top:584px;width:132px;height:1px;background:#1a1a1a"></div>
<div class="a" style="left:300px;top:609px;width:132px;height:1px;background:#1a1a1a"></div>
<div class="a" style="left:432px;top:609px;width:760px;height:1px;background:linear-gradient(90deg,#1b1b1b,#1e1e1e 70%,#222)"></div>
<svg class="a" style="left:305px;top:405px" width="9" height="11"><path d="M2 5V3a2.5 2.5 0 0 1 5 0" stroke="#c4c4c4" stroke-width="1.6" fill="none"/><rect x="0" y="5" width="9" height="6" fill="#c4c4c4"/><rect x="4" y="7" width="1" height="2" fill="#333"/></svg>
<div class="a" style="left:321px;top:399px;width:31px;height:21px;background:#262626"></div>
<div class="t" style="left:328px;top:404px;font-size:11px;color:#8e8e8e">V2</div>
<svg class="a" style="left:357px;top:403px" width="13" height="9"><path d="M0.75 0.75h8v3h-8zM0.75 4.75h8v3.5h-8zM8.5 2h3.75v5H8.5" fill="none" stroke="#c4c4c4" stroke-width="1.4"/></svg>
<svg class="a" style="left:376px;top:403px" width="13" height="9"><path d="M0.5 4.5Q6.5 -2 12.5 4.5Q6.5 11 0.5 4.5z" fill="none" stroke="#9a9a9a" stroke-width="1.2"/><circle cx="6.5" cy="4.5" r="2.3" fill="#9a9a9a"/></svg>
<svg class="a" style="left:305px;top:429px" width="9" height="11"><path d="M2 5V3a2.5 2.5 0 0 1 5 0" stroke="#c4c4c4" stroke-width="1.6" fill="none"/><rect x="0" y="5" width="9" height="6" fill="#c4c4c4"/><rect x="4" y="7" width="1" height="2" fill="#333"/></svg>
<div class="a" style="left:321px;top:421px;width:31px;height:24px;background:#555"></div>
<div class="t" style="left:328px;top:427px;font-size:11px;font-weight:bold;color:#c4c4c4">V1</div>
<svg class="a" style="left:357px;top:428px" width="13" height="9"><path d="M0.75 0.75h8v3h-8zM0.75 4.75h8v3.5h-8zM8.5 2h3.75v5H8.5" fill="none" stroke="#c4c4c4" stroke-width="1.4"/></svg>
<svg class="a" style="left:376px;top:428px" width="13" height="9"><path d="M0.5 4.5Q6.5 -2 12.5 4.5Q6.5 11 0.5 4.5z" fill="none" stroke="#9a9a9a" stroke-width="1.2"/><circle cx="6.5" cy="4.5" r="2.3" fill="#9a9a9a"/></svg>
<div class="a" style="left:265px;top:450px;width:31px;height:84px;background:#333"></div>
<div class="t" style="left:273px;top:482px;font-size:11px;color:#8e8e8e">A1</div>
<svg class="a" style="left:305px;top:482px" width="9" height="11"><path d="M2 5V3a2.5 2.5 0 0 1 5 0" stroke="#c4c4c4" stroke-width="1.6" fill="none"/><rect x="0" y="5" width="9" height="6" fill="#c4c4c4"/><rect x="4" y="7" width="1" height="2" fill="#333"/></svg>
<div class="a" style="left:321px;top:450px;width:31px;height:84px;background:#555"></div>
<div class="t" style="left:328px;top:482px;font-size:11px;font-weight:bold;color:#c4c4c4">A1</div>
<svg class="a" style="left:357px;top:457px" width="13" height="9"><path d="M0.75 0.75h8v3h-8zM0.75 4.75h8v3.5h-8zM8.5 2h3.75v5H8.5" fill="none" stroke="#c4c4c4" stroke-width="1.4"/></svg>
<div class="t" style="left:378px;top:457px;font-size:10px;color:#bbb">M</div>
<div class="t" style="left:400px;top:457px;font-size:10px;color:#bbb">S</div>
<div class="t" style="left:356px;top:481px;font-size:12px;color:#c8c8c8">音频 <span style="color:#999;font-size:11px">1</span></div>
<svg class="a" style="left:357px;top:507px" width="12" height="12"><path d="M5 0l5 5-5 5-5-5z" fill="#c8c8c8"/><path d="M8 11h3V8z" fill="#ddd"/></svg>
<svg class="a" style="left:379px;top:507px" width="7" height="11"><path d="M6 0L0 5.5 6 11z" fill="#444"/></svg>
<svg class="a" style="left:399px;top:507px" width="10" height="10"><path d="M5 0.8L9.2 5 5 9.2 0.8 5z" fill="none" stroke="#aaa" stroke-width="1.1"/></svg>
<svg class="a" style="left:421px;top:507px" width="7" height="11"><path d="M0 0l6 5.5L0 11z" fill="#444"/></svg>
<svg class="a" style="left:305px;top:542px" width="9" height="11"><path d="M2 5V3a2.5 2.5 0 0 1 5 0" stroke="#c4c4c4" stroke-width="1.6" fill="none"/><rect x="0" y="5" width="9" height="6" fill="#c4c4c4"/><rect x="4" y="7" width="1" height="2" fill="#333"/></svg>
<div class="a" style="left:321px;top:535px;width:31px;height:24px;background:#4b4b4b"></div>
<div class="t" style="left:328px;top:542px;font-size:11px;font-weight:bold;color:#b8b8b8">A2</div>
<svg class="a" style="left:357px;top:543px" width="13" height="9"><path d="M0.75 0.75h8v3h-8zM0.75 4.75h8v3.5h-8zM8.5 2h3.75v5H8.5" fill="none" stroke="#c4c4c4" stroke-width="1.4"/></svg>
<div class="t" style="left:378px;top:542px;font-size:10px;color:#bbb">M</div>
<div class="t" style="left:400px;top:542px;font-size:10px;color:#bbb">S</div>
<svg class="a" style="left:305px;top:567px" width="9" height="11"><path d="M2 5V3a2.5 2.5 0 0 1 5 0" stroke="#c4c4c4" stroke-width="1.6" fill="none"/><rect x="0" y="5" width="9" height="6" fill="#c4c4c4"/><rect x="4" y="7" width="1" height="2" fill="#333"/></svg>
<div class="a" style="left:321px;top:560px;width:31px;height:24px;background:#4b4b4b"></div>
<div class="t" style="left:328px;top:567px;font-size:11px;font-weight:bold;color:#b8b8b8">A3</div>
<svg class="a" style="left:357px;top:568px" width="13" height="9"><path d="M0.75 0.75h8v3h-8zM0.75 4.75h8v3.5h-8zM8.5 2h3.75v5H8.5" fill="none" stroke="#c4c4c4" stroke-width="1.4"/></svg>
<div class="t" style="left:378px;top:567px;font-size:10px;color:#bbb">M</div>
<div class="t" style="left:400px;top:567px;font-size:10px;color:#bbb">S</div>
<svg class="a" style="left:305px;top:592px" width="9" height="11"><path d="M2 5V3a2.5 2.5 0 0 1 5 0" stroke="#c4c4c4" stroke-width="1.6" fill="none"/><rect x="0" y="5" width="9" height="6" fill="#c4c4c4"/><rect x="4" y="7" width="1" height="2" fill="#333"/></svg>
<div class="t" style="left:324px;top:591px;font-size:12px;color:#c8c8c8">主声道</div>
<div class="a" style="left:372px;top:586px;width:1px;height:23px;background:#1d1d1d"></div>
<div class="t" style="left:383px;top:592px;font-size:11px;color:#c4a040">-5.5</div>
<svg class="a" style="left:417px;top:592px" width="12" height="11"><path d="M0 0l6 5.5L12 0v11L6 5.5 0 11z" fill="#c4c4c4"/></svg>
<div class="a" style="left:433px;top:450px;width:402px;height:84px;background:#d4d8d6"></div>
<div class="a" style="left:437px;top:454px;width:395px;height:38px;background:#1b6e52"></div>
<div class="a" style="left:437px;top:496px;width:395px;height:36px;background:#1b6e52"></div>
<div class="a" style="left:433px;top:494px;width:402px;height:1px;background:#101010"></div>
<svg class="a" style="left:0;top:0" width="1280" height="720" viewBox="0 0 1280 720"><path d="M494.0 491.0 L494.0 461.3 L495.0 461.3 L495.0 472.1 L496.0 472.1 L496.0 481.8 L497.0 481.8 L497.0 485.0 L498.0 485.0 L498.0 484.9 L499.0 484.9 L499.0 483.5 L500.0 483.5 L500.0 475.9 L501.0 475.9 L501.0 469.1 L502.0 469.1 L502.0 477.0 L503.0 477.0 L503.0 483.7 L504.0 483.7 L504.0 486.1 L505.0 486.1 L505.0 482.7 L506.0 482.7 L506.0 475.2 L507.0 475.2 L507.0 467.7 L508.0 467.7 L508.0 474.5 L509.0 474.5 L509.0 478.7 L510.0 478.7 L510.0 473.2 L511.0 473.2 L511.0 478.7 L512.0 478.7 L512.0 482.6 L513.0 482.6 L513.0 479.2 L514.0 479.2 L514.0 473.5 L515.0 473.5 L515.0 479.3 L516.0 479.3 L516.0 480.4 L517.0 480.4 L517.0 475.0 L518.0 475.0 L518.0 480.4 L519.0 480.4 L519.0 485.3 L520.0 485.3 L520.0 489.2 L521.0 489.2 L521.0 486.0 L522.0 486.0 L522.0 480.1 L523.0 480.1 L523.0 474.6 L524.0 474.6 L524.0 480.1 L525.0 480.1 L525.0 480.4 L526.0 480.4 L526.0 469.4 L527.0 469.4 L527.0 479.4 L528.0 479.4 L528.0 484.0 L529.0 484.0 L529.0 480.6 L530.0 480.6 L530.0 476.8 L531.0 476.8 L531.0 480.6 L532.0 480.6 L532.0 474.2 L533.0 474.2 L533.0 464.7 L534.0 464.7 L534.0 473.5 L535.0 473.5 L535.0 482.5 L536.0 482.5 L536.0 486.7 L537.0 486.7 L537.0 478.5 L538.0 478.5 L538.0 465.6 L539.0 465.6 L539.0 478.9 L540.0 478.9 L540.0 486.6 L541.0 486.6 L541.0 486.7 L542.0 486.7 L542.0 481.8 L543.0 481.8 L543.0 472.4 L544.0 472.4 L544.0 481.5 L545.0 481.5 L545.0 486.8 L546.0 486.8 L546.0 486.2 L547.0 486.2 L547.0 483.2 L548.0 483.2 L548.0 479.3 L549.0 479.3 L549.0 475.3 L550.0 475.3 L550.0 479.0 L551.0 479.0 L551.0 483.1 L552.0 483.1 L552.0 485.3 L553.0 485.3 L553.0 481.5 L554.0 481.5 L554.0 473.4 L555.0 473.4 L555.0 481.9 L556.0 481.9 L556.0 486.0 L557.0 486.0 L557.0 479.2 L558.0 479.2 L558.0 467.1 L559.0 467.1 L559.0 478.7 L560.0 478.7 L560.0 487.9 L561.0 487.9 L561.0 488.7 L562.0 488.7 L562.0 483.3 L563.0 483.3 L563.0 474.7 L564.0 474.7 L564.0 466.8 L565.0 466.8 L565.0 475.3 L566.0 475.3 L566.0 483.1 L567.0 483.1 L567.0 488.7 L568.0 488.7 L568.0 489.2 L569.0 489.2 L569.0 485.8 L570.0 485.8 L570.0 480.6 L571.0 480.6 L571.0 475.5 L572.0 475.5 L572.0 480.4 L573.0 480.4 L573.0 485.7 L574.0 485.7 L574.0 487.9 L575.0 487.9 L575.0 484.3 L576.0 484.3 L576.0 481.3 L577.0 481.3 L577.0 477.9 L578.0 477.9 L578.0 481.9 L579.0 481.9 L579.0 484.4 L580.0 484.4 L580.0 487.1 L581.0 487.1 L581.0 486.7 L582.0 486.7 L582.0 481.2 L583.0 481.2 L583.0 470.8 L584.0 470.8 L584.0 481.5 L585.0 481.5 L585.0 485.3 L586.0 485.3 L586.0 479.4 L587.0 479.4 L587.0 473.3 L588.0 473.3 L588.0 479.1 L589.0 479.1 L589.0 485.3 L590.0 485.3 L590.0 489.1 L591.0 489.1 L591.0 489.0 L592.0 489.0 L592.0 483.9 L593.0 483.9 L593.0 477.5 L594.0 477.5 L594.0 469.7 L595.0 469.7 L595.0 477.8 L596.0 477.8 L596.0 484.4 L597.0 484.4 L597.0 483.7 L598.0 483.7 L598.0 476.2 L599.0 476.2 L599.0 470.5 L600.0 470.5 L600.0 476.2 L601.0 476.2 L601.0 484.1 L602.0 484.1 L602.0 482.8 L603.0 482.8 L603.0 475.6 L604.0 475.6 L604.0 467.0 L605.0 467.0 L605.0 475.5 L606.0 475.5 L606.0 482.6 L607.0 482.6 L607.0 486.8 L608.0 486.8 L608.0 486.5 L609.0 486.5 L609.0 481.9 L610.0 481.9 L610.0 477.7 L611.0 477.7 L611.0 472.7 L612.0 472.7 L612.0 477.0 L613.0 477.0 L613.0 481.6 L614.0 481.6 L614.0 486.3 L615.0 486.3 L615.0 486.5 L616.0 486.5 L616.0 486.9 L617.0 486.9 L617.0 484.7 L618.0 484.7 L618.0 479.2 L619.0 479.2 L619.0 485.0 L620.0 485.0 L620.0 486.3 L621.0 486.3 L621.0 486.6 L622.0 486.6 L622.0 487.3 L623.0 487.3 L623.0 486.9 L624.0 486.9 L624.0 482.7 L625.0 482.7 L625.0 473.9 L626.0 473.9 L626.0 482.9 L627.0 482.9 L627.0 487.5 L628.0 487.5 L628.0 487.2 L629.0 487.2 L629.0 487.7 L630.0 487.7 L630.0 486.9 L631.0 486.9 L631.0 478.6 L632.0 478.6 L632.0 466.4 L633.0 466.4 L633.0 477.8 L634.0 477.8 L634.0 489.1 L635.0 489.1 L635.0 489.1 L636.0 489.1 L636.0 487.2 L637.0 487.2 L637.0 482.9 L638.0 482.9 L638.0 479.0 L639.0 479.0 L639.0 478.9 L640.0 478.9 L640.0 472.3 L641.0 472.3 L641.0 466.7 L642.0 466.7 L642.0 472.7 L643.0 472.7 L643.0 478.6 L644.0 478.6 L644.0 484.8 L645.0 484.8 L645.0 478.0 L646.0 478.0 L646.0 471.2 L647.0 471.2 L647.0 466.5 L648.0 466.5 L648.0 472.5 L649.0 472.5 L649.0 477.7 L650.0 477.7 L650.0 483.8 L651.0 483.8 L651.0 480.4 L652.0 480.4 L652.0 476.9 L653.0 476.9 L653.0 480.2 L654.0 480.2 L654.0 483.3 L655.0 483.3 L655.0 478.6 L656.0 478.6 L656.0 474.6 L657.0 474.6 L657.0 479.1 L658.0 479.1 L658.0 482.8 L659.0 482.8 L659.0 486.9 L660.0 486.9 L660.0 486.5 L661.0 486.5 L661.0 485.8 L662.0 485.8 L662.0 480.4 L663.0 480.4 L663.0 475.6 L664.0 475.6 L664.0 481.0 L665.0 481.0 L665.0 485.3 L666.0 485.3 L666.0 485.2 L667.0 485.2 L667.0 484.1 L668.0 484.1 L668.0 477.7 L669.0 477.7 L669.0 470.1 L670.0 470.1 L670.0 476.9 L671.0 476.9 L671.0 484.4 L672.0 484.4 L672.0 479.9 L673.0 479.9 L673.0 469.0 L674.0 469.0 L674.0 480.1 L675.0 480.1 L675.0 482.1 L676.0 482.1 L676.0 477.4 L677.0 477.4 L677.0 482.0 L678.0 482.0 L678.0 476.5 L679.0 476.5 L679.0 468.8 L680.0 468.8 L680.0 476.7 L681.0 476.7 L681.0 483.6 L682.0 483.6 L682.0 484.2 L683.0 484.2 L683.0 480.4 L684.0 480.4 L684.0 476.1 L685.0 476.1 L685.0 480.1 L686.0 480.1 L686.0 481.6 L687.0 481.6 L687.0 472.5 L688.0 472.5 L688.0 481.5 L689.0 481.5 L689.0 485.5 L690.0 485.5 L690.0 486.3 L691.0 486.3 L691.0 486.4 L692.0 486.4 L692.0 484.1 L693.0 484.1 L693.0 477.6 L694.0 477.6 L694.0 469.7 L695.0 469.7 L695.0 477.6 L696.0 477.6 L696.0 484.2 L697.0 484.2 L697.0 485.2 L698.0 485.2 L698.0 485.6 L699.0 485.6 L699.0 486.8 L700.0 486.8 L700.0 478.9 L701.0 478.9 L701.0 466.3 L702.0 466.3 L702.0 478.1 L703.0 478.1 L703.0 488.4 L704.0 488.4 L704.0 487.6 L705.0 487.6 L705.0 483.8 L706.0 483.8 L706.0 476.9 L707.0 476.9 L707.0 470.3 L708.0 470.3 L708.0 477.8 L709.0 477.8 L709.0 483.9 L710.0 483.9 L710.0 487.2 L711.0 487.2 L711.0 487.1 L712.0 487.1 L712.0 486.4 L713.0 486.4 L713.0 481.6 L714.0 481.6 L714.0 477.0 L715.0 477.0 L715.0 482.0 L716.0 482.0 L716.0 485.2 L717.0 485.2 L717.0 485.7 L718.0 485.7 L718.0 486.3 L719.0 486.3 L719.0 486.5 L720.0 486.5 L720.0 482.1 L721.0 482.1 L721.0 477.2 L722.0 477.2 L722.0 481.4 L723.0 481.4 L723.0 482.3 L724.0 482.3 L724.0 474.6 L725.0 474.6 L725.0 466.9 L726.0 466.9 L726.0 474.7 L727.0 474.7 L727.0 482.8 L728.0 482.8 L728.0 481.2 L729.0 481.2 L729.0 475.0 L730.0 475.0 L730.0 480.7 L731.0 480.7 L731.0 485.8 L732.0 485.8 L732.0 481.9 L733.0 481.9 L733.0 477.0 L734.0 477.0 L734.0 481.9 L735.0 481.9 L735.0 482.8 L736.0 482.8 L736.0 479.0 L737.0 479.0 L737.0 482.8 L738.0 482.8 L738.0 484.0 L739.0 484.0 L739.0 476.0 L740.0 476.0 L740.0 469.7 L741.0 469.7 L741.0 475.7 L742.0 475.7 L742.0 483.7 L743.0 483.7 L743.0 487.4 L744.0 487.4 L744.0 485.0 L745.0 485.0 L745.0 481.7 L746.0 481.7 L746.0 479.3 L747.0 479.3 L747.0 482.1 L748.0 482.1 L748.0 485.1 L749.0 485.1 L749.0 487.9 L750.0 487.9 L750.0 489.2 L751.0 489.2 L751.0 483.5 L752.0 483.5 L752.0 475.5 L753.0 475.5 L753.0 467.1 L754.0 467.1 L754.0 476.2 L755.0 476.2 L755.0 483.2 L756.0 483.2 L756.0 482.9 L757.0 482.9 L757.0 473.6 L758.0 473.6 L758.0 482.1 L759.0 482.1 L759.0 482.0 L760.0 482.0 L760.0 478.0 L761.0 478.0 L761.0 482.0 L762.0 482.0 L762.0 486.6 L763.0 486.6 L763.0 486.9 L764.0 486.9 L764.0 482.8 L765.0 482.8 L765.0 479.3 L766.0 479.3 L766.0 491.0z M810.0 491.0 L810.0 470.9 L811.0 470.9 L811.0 478.1 L812.0 478.1 L812.0 481.1 L813.0 481.1 L813.0 469.4 L814.0 469.4 L814.0 480.2 L815.0 480.2 L815.0 484.5 L816.0 484.5 L816.0 481.4 L817.0 481.4 L817.0 477.5 L818.0 477.5 L818.0 480.8 L819.0 480.8 L819.0 484.5 L820.0 484.5 L820.0 479.9 L821.0 479.9 L821.0 474.2 L822.0 474.2 L822.0 469.1 L823.0 469.1 L823.0 473.6 L824.0 473.6 L824.0 479.8 L825.0 479.8 L825.0 480.7 L826.0 480.7 L826.0 471.2 L827.0 471.2 L827.0 481.2 L828.0 481.2 L828.0 489.1 L829.0 489.1 L829.0 489.1 L830.0 489.1 L830.0 489.1 L831.0 489.1 L831.0 489.2 L832.0 489.2 L832.0 489.2 L833.0 489.2 L833.0 491.0z M494.0 532.0 L494.0 501.9 L495.0 501.9 L495.0 514.1 L496.0 514.1 L496.0 523.3 L497.0 523.3 L497.0 526.5 L498.0 526.5 L498.0 526.2 L499.0 526.2 L499.0 524.8 L500.0 524.8 L500.0 518.0 L501.0 518.0 L501.0 510.8 L502.0 510.8 L502.0 518.1 L503.0 518.1 L503.0 524.3 L504.0 524.3 L504.0 527.2 L505.0 527.2 L505.0 523.4 L506.0 523.4 L506.0 514.7 L507.0 514.7 L507.0 507.8 L508.0 507.8 L508.0 514.7 L509.0 514.7 L509.0 519.4 L510.0 519.4 L510.0 514.0 L511.0 514.0 L511.0 519.6 L512.0 519.6 L512.0 523.9 L513.0 523.9 L513.0 519.3 L514.0 519.3 L514.0 514.1 L515.0 514.1 L515.0 519.8 L516.0 519.8 L516.0 522.3 L517.0 522.3 L517.0 514.6 L518.0 514.6 L518.0 521.6 L519.0 521.6 L519.0 527.0 L520.0 527.0 L520.0 530.4 L521.0 530.4 L521.0 526.6 L522.0 526.6 L522.0 520.7 L523.0 520.7 L523.0 515.7 L524.0 515.7 L524.0 521.2 L525.0 521.2 L525.0 520.5 L526.0 520.5 L526.0 512.8 L527.0 512.8 L527.0 520.1 L528.0 520.1 L528.0 524.4 L529.0 524.4 L529.0 520.6 L530.0 520.6 L530.0 516.7 L531.0 516.7 L531.0 521.7 L532.0 521.7 L532.0 516.0 L533.0 516.0 L533.0 506.9 L534.0 506.9 L534.0 513.4 L535.0 513.4 L535.0 523.7 L536.0 523.7 L536.0 527.4 L537.0 527.4 L537.0 520.8 L538.0 520.8 L538.0 505.1 L539.0 505.1 L539.0 518.8 L540.0 518.8 L540.0 527.9 L541.0 527.9 L541.0 527.5 L542.0 527.5 L542.0 522.7 L543.0 522.7 L543.0 513.9 L544.0 513.9 L544.0 523.9 L545.0 523.9 L545.0 527.9 L546.0 527.9 L546.0 527.4 L547.0 527.4 L547.0 524.8 L548.0 524.8 L548.0 519.2 L549.0 519.2 L549.0 517.8 L550.0 517.8 L550.0 521.4 L551.0 521.4 L551.0 524.5 L552.0 524.5 L552.0 526.4 L553.0 526.4 L553.0 523.0 L554.0 523.0 L554.0 512.5 L555.0 512.5 L555.0 522.7 L556.0 522.7 L556.0 527.7 L557.0 527.7 L557.0 519.9 L558.0 519.9 L558.0 508.9 L559.0 508.9 L559.0 520.5 L560.0 520.5 L560.0 529.3 L561.0 529.3 L561.0 530.0 L562.0 530.0 L562.0 525.0 L563.0 525.0 L563.0 516.2 L564.0 516.2 L564.0 507.7 L565.0 507.7 L565.0 517.1 L566.0 517.1 L566.0 525.3 L567.0 525.3 L567.0 529.7 L568.0 529.7 L568.0 530.2 L569.0 530.2 L569.0 526.3 L570.0 526.3 L570.0 520.6 L571.0 520.6 L571.0 517.3 L572.0 517.3 L572.0 522.0 L573.0 522.0 L573.0 526.8 L574.0 526.8 L574.0 528.5 L575.0 528.5 L575.0 525.5 L576.0 525.5 L576.0 523.6 L577.0 523.6 L577.0 520.8 L578.0 520.8 L578.0 523.5 L579.0 523.5 L579.0 525.5 L580.0 525.5 L580.0 528.0 L581.0 528.0 L581.0 527.7 L582.0 527.7 L582.0 521.7 L583.0 521.7 L583.0 514.5 L584.0 514.5 L584.0 522.5 L585.0 522.5 L585.0 525.8 L586.0 525.8 L586.0 520.1 L587.0 520.1 L587.0 515.1 L588.0 515.1 L588.0 521.2 L589.0 521.2 L589.0 526.8 L590.0 526.8 L590.0 530.1 L591.0 530.1 L591.0 529.9 L592.0 529.9 L592.0 524.7 L593.0 524.7 L593.0 517.8 L594.0 517.8 L594.0 509.9 L595.0 509.9 L595.0 519.7 L596.0 519.7 L596.0 525.1 L597.0 525.1 L597.0 524.4 L598.0 524.4 L598.0 517.4 L599.0 517.4 L599.0 509.0 L600.0 509.0 L600.0 517.3 L601.0 517.3 L601.0 525.0 L602.0 525.0 L602.0 524.9 L603.0 524.9 L603.0 517.5 L604.0 517.5 L604.0 509.1 L605.0 509.1 L605.0 517.8 L606.0 517.8 L606.0 524.5 L607.0 524.5 L607.0 528.1 L608.0 528.1 L608.0 527.5 L609.0 527.5 L609.0 522.7 L610.0 522.7 L610.0 518.7 L611.0 518.7 L611.0 514.5 L612.0 514.5 L612.0 519.8 L613.0 519.8 L613.0 522.8 L614.0 522.8 L614.0 527.9 L615.0 527.9 L615.0 527.4 L616.0 527.4 L616.0 528.4 L617.0 528.4 L617.0 526.5 L618.0 526.5 L618.0 521.4 L619.0 521.4 L619.0 526.1 L620.0 526.1 L620.0 527.1 L621.0 527.1 L621.0 528.1 L622.0 528.1 L622.0 528.8 L623.0 528.8 L623.0 527.5 L624.0 527.5 L624.0 524.1 L625.0 524.1 L625.0 514.9 L626.0 514.9 L626.0 524.3 L627.0 524.3 L627.0 528.3 L628.0 528.3 L628.0 528.0 L629.0 528.0 L629.0 529.1 L630.0 529.1 L630.0 528.2 L631.0 528.2 L631.0 520.7 L632.0 520.7 L632.0 506.3 L633.0 506.3 L633.0 519.7 L634.0 519.7 L634.0 530.0 L635.0 530.0 L635.0 530.1 L636.0 530.1 L636.0 527.9 L637.0 527.9 L637.0 524.1 L638.0 524.1 L638.0 520.9 L639.0 520.9 L639.0 518.7 L640.0 518.7 L640.0 514.5 L641.0 514.5 L641.0 504.3 L642.0 504.3 L642.0 513.2 L643.0 513.2 L643.0 520.3 L644.0 520.3 L644.0 526.3 L645.0 526.3 L645.0 520.2 L646.0 520.2 L646.0 513.8 L647.0 513.8 L647.0 507.0 L648.0 507.0 L648.0 514.8 L649.0 514.8 L649.0 520.2 L650.0 520.2 L650.0 525.4 L651.0 525.4 L651.0 522.5 L652.0 522.5 L652.0 517.3 L653.0 517.3 L653.0 522.1 L654.0 522.1 L654.0 524.2 L655.0 524.2 L655.0 521.0 L656.0 521.0 L656.0 517.5 L657.0 517.5 L657.0 520.1 L658.0 520.1 L658.0 524.2 L659.0 524.2 L659.0 528.1 L660.0 528.1 L660.0 528.1 L661.0 528.1 L661.0 526.4 L662.0 526.4 L662.0 520.7 L663.0 520.7 L663.0 516.1 L664.0 516.1 L664.0 520.9 L665.0 520.9 L665.0 526.1 L666.0 526.1 L666.0 527.2 L667.0 527.2 L667.0 525.1 L668.0 525.1 L668.0 517.9 L669.0 517.9 L669.0 513.9 L670.0 513.9 L670.0 518.8 L671.0 518.8 L671.0 525.5 L672.0 525.5 L672.0 521.8 L673.0 521.8 L673.0 512.9 L674.0 512.9 L674.0 520.5 L675.0 520.5 L675.0 523.7 L676.0 523.7 L676.0 517.6 L677.0 517.6 L677.0 523.3 L678.0 523.3 L678.0 517.3 L679.0 517.3 L679.0 512.4 L680.0 512.4 L680.0 517.8 L681.0 517.8 L681.0 524.9 L682.0 524.9 L682.0 525.8 L683.0 525.8 L683.0 520.5 L684.0 520.5 L684.0 519.2 L685.0 519.2 L685.0 520.9 L686.0 520.9 L686.0 522.1 L687.0 522.1 L687.0 514.7 L688.0 514.7 L688.0 523.8 L689.0 523.8 L689.0 526.0 L690.0 526.0 L690.0 528.1 L691.0 528.1 L691.0 527.2 L692.0 527.2 L692.0 525.6 L693.0 525.6 L693.0 517.9 L694.0 517.9 L694.0 512.7 L695.0 512.7 L695.0 519.8 L696.0 519.8 L696.0 525.2 L697.0 525.2 L697.0 526.0 L698.0 526.0 L698.0 527.0 L699.0 527.0 L699.0 528.1 L700.0 528.1 L700.0 519.2 L701.0 519.2 L701.0 505.5 L702.0 505.5 L702.0 518.6 L703.0 518.6 L703.0 529.6 L704.0 529.6 L704.0 528.3 L705.0 528.3 L705.0 524.7 L706.0 524.7 L706.0 517.3 L707.0 517.3 L707.0 511.3 L708.0 511.3 L708.0 518.1 L709.0 518.1 L709.0 524.9 L710.0 524.9 L710.0 528.5 L711.0 528.5 L711.0 528.4 L712.0 528.4 L712.0 528.1 L713.0 528.1 L713.0 523.1 L714.0 523.1 L714.0 519.9 L715.0 519.9 L715.0 523.3 L716.0 523.3 L716.0 526.5 L717.0 526.5 L717.0 527.2 L718.0 527.2 L718.0 527.8 L719.0 527.8 L719.0 527.0 L720.0 527.0 L720.0 524.0 L721.0 524.0 L721.0 517.6 L722.0 517.6 L722.0 522.5 L723.0 522.5 L723.0 523.2 L724.0 523.2 L724.0 516.0 L725.0 516.0 L725.0 507.4 L726.0 507.4 L726.0 517.2 L727.0 517.2 L727.0 524.1 L728.0 524.1 L728.0 521.0 L729.0 521.0 L729.0 515.4 L730.0 515.4 L730.0 521.8 L731.0 521.8 L731.0 527.1 L732.0 527.1 L732.0 523.4 L733.0 523.4 L733.0 517.2 L734.0 517.2 L734.0 523.1 L735.0 523.1 L735.0 523.1 L736.0 523.1 L736.0 519.2 L737.0 519.2 L737.0 523.2 L738.0 523.2 L738.0 525.5 L739.0 525.5 L739.0 518.9 L740.0 518.9 L740.0 508.1 L741.0 508.1 L741.0 518.2 L742.0 518.2 L742.0 524.8 L743.0 524.8 L743.0 528.7 L744.0 528.7 L744.0 526.9 L745.0 526.9 L745.0 522.4 L746.0 522.4 L746.0 521.0 L747.0 521.0 L747.0 523.0 L748.0 523.0 L748.0 526.3 L749.0 526.3 L749.0 529.2 L750.0 529.2 L750.0 530.3 L751.0 530.3 L751.0 523.9 L752.0 523.9 L752.0 515.6 L753.0 515.6 L753.0 507.4 L754.0 507.4 L754.0 517.9 L755.0 517.9 L755.0 523.8 L756.0 523.8 L756.0 524.3 L757.0 524.3 L757.0 514.1 L758.0 514.1 L758.0 522.8 L759.0 522.8 L759.0 523.2 L760.0 523.2 L760.0 520.0 L761.0 520.0 L761.0 522.3 L762.0 522.3 L762.0 527.5 L763.0 527.5 L763.0 527.9 L764.0 527.9 L764.0 523.2 L765.0 523.2 L765.0 519.0 L766.0 519.0 L766.0 532.0z M810.0 532.0 L810.0 509.8 L811.0 509.8 L811.0 518.1 L812.0 518.1 L812.0 521.0 L813.0 521.0 L813.0 512.5 L814.0 512.5 L814.0 521.8 L815.0 521.8 L815.0 525.4 L816.0 525.4 L816.0 523.1 L817.0 523.1 L817.0 518.6 L818.0 518.6 L818.0 522.5 L819.0 522.5 L819.0 526.1 L820.0 526.1 L820.0 522.2 L821.0 522.2 L821.0 515.6 L822.0 515.6 L822.0 512.1 L823.0 512.1 L823.0 514.2 L824.0 514.2 L824.0 520.9 L825.0 520.9 L825.0 522.3 L826.0 522.3 L826.0 513.3 L827.0 513.3 L827.0 521.6 L828.0 521.6 L828.0 530.4 L829.0 530.4 L829.0 530.3 L830.0 530.3 L830.0 530.2 L831.0 530.2 L831.0 530.2 L832.0 530.2 L832.0 530.2 L833.0 530.2 L833.0 532.0z " fill="#cdd5d1" shape-rendering="crispEdges"/></svg>
<svg class="a" style="left:830px;top:450px" width="6" height="6"><path d="M0 0h6v6z" fill="#1a1a1a"/><path d="M0.5 0.5L5.5 5.5" stroke="#ddd" stroke-width="0.8"/></svg>
<div class="a" style="left:437px;top:476px;width:9px;height:12px;background:#125540"></div>
<div class="t" style="left:438px;top:478px;font-size:9px;color:#ccc">L</div>
<div class="a" style="left:437px;top:519px;width:10px;height:13px;background:#125540"></div>
<div class="t" style="left:438px;top:521px;font-size:9px;color:#ccc">R</div>
<div class="a" style="left:442px;top:452px;width:12px;height:10px;background:#e8c860;border:1px solid #3a3000"></div>
<div class="t" style="left:443px;top:452px;font-size:9px;font-style:italic;font-weight:bold;color:#222">fx</div>
<div class="a" style="left:1196px;top:399px;width:13px;height:47px;background:#141414"></div>
<div class="a" style="left:1197px;top:403px;width:11px;height:12px;background:#4e4e4e;border:1px solid #1a1a1a"></div>
<div class="a" style="left:1197px;top:416px;width:11px;height:16px;background:#8c8c8c"></div>
<div class="a" style="left:1200px;top:421px;width:5px;height:5px;background:repeating-linear-gradient(#444 0 1px,transparent 1px 2px)"></div>
<div class="a" style="left:1197px;top:433px;width:11px;height:12px;background:#4e4e4e;border:1px solid #1a1a1a"></div>
<div class="a" style="left:1196px;top:450px;width:13px;height:223px;background:#141414"></div>
<div class="a" style="left:1197px;top:451px;width:11px;height:12px;background:#4e4e4e;border:1px solid #1a1a1a"></div>
<div class="a" style="left:1197px;top:464px;width:11px;height:194px;background:#8a8a8a"></div>
<div class="a" style="left:1200px;top:559px;width:5px;height:5px;background:repeating-linear-gradient(#555 0 1px,transparent 1px 2px)"></div>
<div class="a" style="left:1197px;top:659px;width:11px;height:12px;background:#4e4e4e;border:1px solid #1a1a1a"></div>
<div class="a" style="left:1200px;top:406px;width:5px;height:5px;background:repeating-linear-gradient(90deg,#999 0 1px,transparent 1px 2px);-webkit-mask:repeating-linear-gradient(#000 0 1px,transparent 1px 2px)"></div>
<div class="a" style="left:1200px;top:436px;width:5px;height:5px;background:repeating-linear-gradient(90deg,#999 0 1px,transparent 1px 2px);-webkit-mask:repeating-linear-gradient(#000 0 1px,transparent 1px 2px)"></div>
<div class="a" style="left:1200px;top:454px;width:5px;height:5px;background:repeating-linear-gradient(90deg,#999 0 1px,transparent 1px 2px);-webkit-mask:repeating-linear-gradient(#000 0 1px,transparent 1px 2px)"></div>
<div class="a" style="left:1200px;top:662px;width:5px;height:5px;background:repeating-linear-gradient(90deg,#999 0 1px,transparent 1px 2px);-webkit-mask:repeating-linear-gradient(#000 0 1px,transparent 1px 2px)"></div>
<div class="a" style="left:264px;top:677px;width:933px;height:16px;background:#1c1c1c;border-top:1px solid #111;border-bottom:1px solid #111"></div>
<div class="a" style="left:265px;top:679px;width:12px;height:12px;background:#3e3e3e"></div>
<div class="a" style="left:278px;top:679px;width:168px;height:12px;background:#8a8a8a"></div>
<div class="a" style="left:359px;top:682px;width:5px;height:6px;background:repeating-linear-gradient(90deg,#444 0 1px,transparent 1px 2px)"></div>
<div class="a" style="left:447px;top:679px;width:12px;height:12px;background:#3e3e3e"></div>
<div class="a" style="left:268px;top:682px;width:5px;height:5px;background:repeating-linear-gradient(90deg,#888 0 1px,transparent 1px 2px);-webkit-mask:repeating-linear-gradient(#000 0 1px,transparent 1px 2px)"></div>
<div class="a" style="left:450px;top:682px;width:5px;height:5px;background:repeating-linear-gradient(90deg,#888 0 1px,transparent 1px 2px);-webkit-mask:repeating-linear-gradient(#000 0 1px,transparent 1px 2px)"></div>
<svg class="a" style="left:524px;top:384px" width="13" height="14"><path d="M0.5 0.5h12v8l-6 5-6-5z" fill="#e8b830" stroke="#7a5a10"/><path d="M4 3v2M6.5 3v2M9 3v2M4 7h5M6.5 7v6" stroke="#3a2a00"/></svg>
<div class="a" style="left:530px;top:397px;width:1px;height:280px;background:#d04a3a"></div>
<svg class="a" style="left:657px;top:461px" width="13" height="21"><path d="M1 1v16l4-4 3 6 2.5-1-3-6h5.5z" fill="#fff" stroke="#000" stroke-width="1"/></svg>
<!-- Meter -->
<div class="pn" style="left:1218px;top:328px;width:55px;height:369px"></div>
<div class="griph" style="left:1238px;top:333px;width:20px"></div>
<div class="a" style="left:1222px;top:343px;width:28px;height:331px;background:#000;border:1px solid #3a3a3a"></div>
<div class="a" style="left:1236px;top:344px;width:1px;height:9px;background:#3a3a3a"></div>
<div class="a" style="left:1222px;top:352px;width:28px;height:1px;background:#3a3a3a"></div>
<div class="a" style="left:1223px;top:671px;width:12px;height:2px;background:#b8d080"></div>
<div class="a" style="left:1237px;top:671px;width:12px;height:2px;background:#b8d080"></div>
<div class="a" style="left:1250px;top:354px;width:5px;height:1px;background:#888"></div><div class="a" style="left:1250px;top:359px;width:3px;height:1px;background:#888"></div><div class="a" style="left:1250px;top:364px;width:3px;height:1px;background:#888"></div><div class="a" style="left:1250px;top:370px;width:3px;height:1px;background:#888"></div><div class="a" style="left:1250px;top:375px;width:3px;height:1px;background:#888"></div><div class="a" style="left:1250px;top:380px;width:3px;height:1px;background:#888"></div><div class="a" style="left:1250px;top:386px;width:5px;height:1px;background:#888"></div><div class="a" style="left:1250px;top:391px;width:3px;height:1px;background:#888"></div><div class="a" style="left:1250px;top:396px;width:3px;height:1px;background:#888"></div><div class="a" style="left:1250px;top:401px;width:3px;height:1px;background:#888"></div><div class="a" style="left:1250px;top:406px;width:3px;height:1px;background:#888"></div><div class="a" style="left:1250px;top:412px;width:3px;height:1px;background:#888"></div><div class="a" style="left:1250px;top:417px;width:5px;height:1px;background:#888"></div><div class="a" style="left:1250px;top:422px;width:3px;height:1px;background:#888"></div><div class="a" style="left:1250px;top:428px;width:3px;height:1px;background:#888"></div><div class="a" style="left:1250px;top:433px;width:3px;height:1px;background:#888"></div><div class="a" style="left:1250px;top:438px;width:3px;height:1px;background:#888"></div><div class="a" style="left:1250px;top:443px;width:3px;height:1px;background:#888"></div><div class="a" style="left:1250px;top:448px;width:5px;height:1px;background:#888"></div><div class="a" style="left:1250px;top:454px;width:3px;height:1px;background:#888"></div><div class="a" style="left:1250px;top:459px;width:3px;height:1px;background:#888"></div><div class="a" style="left:1250px;top:464px;width:3px;height:1px;background:#888"></div><div class="a" style="left:1250px;top:470px;width:3px;height:1px;background:#888"></div><div class="a" style="left:1250px;top:475px;width:3px;height:1px;background:#888"></div><div class="a" style="left:1250px;top:480px;width:5px;height:1px;background:#888"></div><div class="a" style="left:1250px;top:485px;width:3px;height:1px;background:#888"></div><div class="a" style="left:1250px;top:490px;width:3px;height:1px;background:#888"></div><div class="a" style="left:1250px;top:496px;width:3px;height:1px;background:#888"></div><div class="a" style="left:1250px;top:501px;width:3px;height:1px;background:#888"></div><div class="a" style="left:1250px;top:506px;width:3px;height:1px;background:#888"></div><div class="a" style="left:1250px;top:512px;width:5px;height:1px;background:#888"></div><div class="a" style="left:1250px;top:517px;width:3px;height:1px;background:#888"></div><div class="a" style="left:1250px;top:522px;width:3px;height:1px;background:#888"></div><div class="a" style="left:1250px;top:527px;width:3px;height:1px;background:#888"></div><div class="a" style="left:1250px;top:532px;width:3px;height:1px;background:#888"></div><div class="a" style="left:1250px;top:538px;width:3px;height:1px;background:#888"></div><div class="a" style="left:1250px;top:543px;width:5px;height:1px;background:#888"></div><div class="a" style="left:1250px;top:548px;width:3px;height:1px;background:#888"></div><div class="a" style="left:1250px;top:554px;width:3px;height:1px;background:#888"></div><div class="a" style="left:1250px;top:559px;width:3px;height:1px;background:#888"></div><div class="a" style="left:1250px;top:564px;width:3px;height:1px;background:#888"></div><div class="a" style="left:1250px;top:569px;width:3px;height:1px;background:#888"></div><div class="a" style="left:1250px;top:574px;width:5px;height:1px;background:#888"></div><div class="a" style="left:1250px;top:580px;width:3px;height:1px;background:#888"></div><div class="a" style="left:1250px;top:585px;width:3px;height:1px;background:#888"></div><div class="a" style="left:1250px;top:590px;width:3px;height:1px;background:#888"></div><div class="a" style="left:1250px;top:596px;width:3px;height:1px;background:#888"></div><div class="a" style="left:1250px;top:601px;width:3px;height:1px;background:#888"></div><div class="a" style="left:1250px;top:606px;width:5px;height:1px;background:#888"></div><div class="a" style="left:1250px;top:611px;width:3px;height:1px;background:#888"></div><div class="a" style="left:1250px;top:616px;width:3px;height:1px;background:#888"></div><div class="a" style="left:1250px;top:622px;width:3px;height:1px;background:#888"></div><div class="a" style="left:1250px;top:627px;width:3px;height:1px;background:#888"></div><div class="a" style="left:1250px;top:632px;width:3px;height:1px;background:#888"></div><div class="a" style="left:1250px;top:638px;width:5px;height:1px;background:#888"></div><div class="a" style="left:1250px;top:643px;width:3px;height:1px;background:#888"></div><div class="a" style="left:1250px;top:648px;width:3px;height:1px;background:#888"></div><div class="a" style="left:1250px;top:653px;width:3px;height:1px;background:#888"></div><div class="a" style="left:1250px;top:658px;width:3px;height:1px;background:#888"></div><div class="a" style="left:1250px;top:664px;width:3px;height:1px;background:#888"></div><div class="a" style="left:1250px;top:669px;width:5px;height:1px;background:#888"></div>
<div class="t" style="left:1257px;top:349px;font-size:10px;color:#a8a8a8;letter-spacing:-0.5px">0</div>
<div class="t" style="left:1257px;top:381px;font-size:10px;color:#a8a8a8;letter-spacing:-0.5px">-6</div>
<div class="t" style="left:1257px;top:412px;font-size:10px;color:#a8a8a8;letter-spacing:-0.5px">-12</div>
<div class="t" style="left:1257px;top:443px;font-size:10px;color:#a8a8a8;letter-spacing:-0.5px">-18</div>
<div class="t" style="left:1257px;top:475px;font-size:10px;color:#a8a8a8;letter-spacing:-0.5px">-24</div>
<div class="t" style="left:1257px;top:507px;font-size:10px;color:#a8a8a8;letter-spacing:-0.5px">-30</div>
<div class="t" style="left:1257px;top:538px;font-size:10px;color:#a8a8a8;letter-spacing:-0.5px">-36</div>
<div class="t" style="left:1257px;top:569px;font-size:10px;color:#a8a8a8;letter-spacing:-0.5px">-42</div>
<div class="t" style="left:1257px;top:601px;font-size:10px;color:#a8a8a8;letter-spacing:-0.5px">-48</div>
<div class="t" style="left:1257px;top:633px;font-size:10px;color:#a8a8a8;letter-spacing:-0.5px">-54</div>
<div class="t" style="left:1257px;top:663px;font-size:10px;color:#a8a8a8">dB</div>
<div class="a" style="left:1222px;top:677px;width:13px;height:15px;background:#2a2a2a;border:1px solid #111"></div>
<div class="t" style="left:1222px;top:680px;width:13px;text-align:center;font-size:10px;color:#bbb">S</div>
<div class="a" style="left:1236px;top:677px;width:13px;height:15px;background:#2a2a2a;border:1px solid #111"></div>
<div class="t" style="left:1236px;top:680px;width:13px;text-align:center;font-size:10px;color:#bbb">S</div>
<!-- status -->
<div class="a" style="left:0;top:697px;width:1280px;height:20px;background:#1e1e1e;border-top:1px solid #0a0a0a"></div>
<div class="a" style="left:1252px;top:698px;width:1px;height:19px;background:#151515"></div>
<svg class="a" style="left:0px;top:702px" width="19" height="12"><circle cx="5" cy="5" r="3.2" fill="#bbb"/><path d="M5 0.5v9M0.5 5h9M1.8 1.8l6.4 6.4M8.2 1.8l-6.4 6.4" stroke="#bbb" stroke-width="1.3"/><circle cx="5" cy="5" r="1.2" fill="#1e1e1e"/><path d="M11 5l3-3 3 3M11.5 6l3 3" stroke="#aaa" stroke-width="1.1" fill="none"/><path d="M0 11.5h18" stroke="#888"/></svg>
<div class="t" style="left:43px;top:703px;font-size:12px;color:#c8c8c8;letter-spacing:0.45px">单击以选择，或单击空白处并拖动以进行框选。使用</div>
<div class="t" style="left:333px;top:704px;font-size:11px;font-weight:bold;color:#a8a8a8">Shift</div>
<div class="t" style="left:357px;top:703px;font-size:12px;color:#c8c8c8">、</div>
<div class="t" style="left:369px;top:704px;font-size:11px;font-weight:bold;color:#a8a8a8">Alt</div>
<div class="t" style="left:386px;top:703px;font-size:12px;color:#c8c8c8">和</div>
<div class="t" style="left:401px;top:704px;font-size:11px;font-weight:bold;color:#a8a8a8">Ctrl</div>
<div class="t" style="left:421px;top:703px;font-size:12px;color:#c8c8c8">可获得其他选项。</div>
<div class="a" style="left:0;top:717px;width:1280px;height:3px;background:#2b6ea3"></div>
<div class="a" style="left:1278px;top:0;width:2px;height:720px;background:#2b7ab0"></div>
<!-- red overlay -->
<div class="a" style="left:6px;top:-10px;width:1268px;height:659px;border:2px solid #d9534f"></div>
</body></html>
